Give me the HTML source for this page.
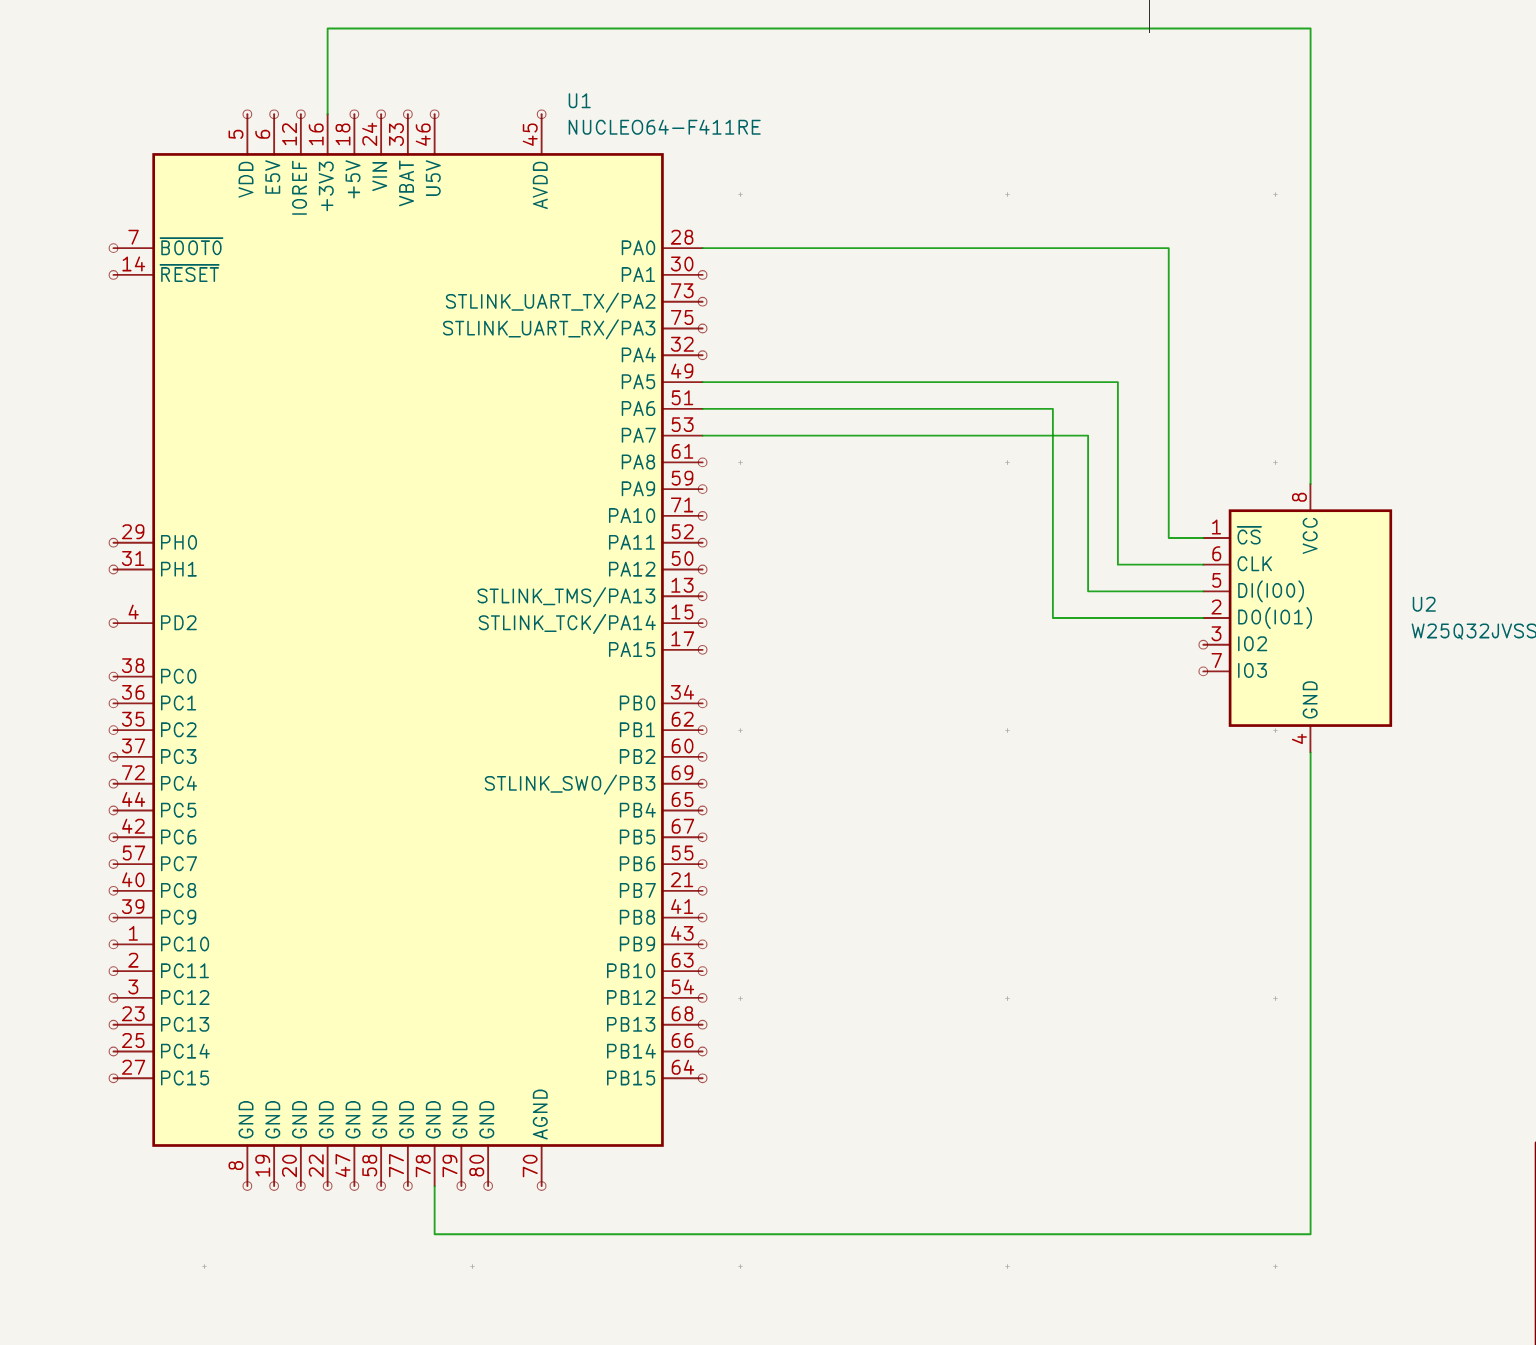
<!DOCTYPE html>
<html><head><meta charset="utf-8"><title>schematic</title>
<style>html,body{margin:0;padding:0;background:#F5F4EF;font-family:"Liberation Sans",sans-serif}svg{display:block}</style>
</head><body>
<svg width="1536" height="1345" viewBox="0 0 1536 1345" role="img" aria-label="KiCad schematic: U1 NUCLEO64-F411RE connected to U2 W25Q32JVSS SPI flash">
<desc>U1 NUCLEO64-F411RE pins PA0 PA5 PA6 PA7 +3V3 GND wired to U2 W25Q32JVSS pins CS CLK DI(IO0) DO(IO1) VCC GND</desc>
<rect width="1536" height="1345" fill="#F5F4EF"/>
<path d="M202.2 194.5h4.6" stroke="#c2c2c0" stroke-width="1" fill="none"/><path d="M204.5 192.4v4.4" stroke="#b1b1b1" stroke-width="1" fill="none"/>
<path d="M202.2 462.5h4.6" stroke="#c2c2c0" stroke-width="1" fill="none"/><path d="M204.5 460.4v4.4" stroke="#b1b1b1" stroke-width="1" fill="none"/>
<path d="M202.2 730.5h4.6" stroke="#c2c2c0" stroke-width="1" fill="none"/><path d="M204.5 728.4v4.4" stroke="#b1b1b1" stroke-width="1" fill="none"/>
<path d="M202.2 998.5h4.6" stroke="#c2c2c0" stroke-width="1" fill="none"/><path d="M204.5 996.4v4.4" stroke="#b1b1b1" stroke-width="1" fill="none"/>
<path d="M202.2 1266.5h4.6" stroke="#c2c2c0" stroke-width="1" fill="none"/><path d="M204.5 1264.4v4.4" stroke="#b1b1b1" stroke-width="1" fill="none"/>
<path d="M470.2 194.5h4.6" stroke="#c2c2c0" stroke-width="1" fill="none"/><path d="M472.5 192.4v4.4" stroke="#b1b1b1" stroke-width="1" fill="none"/>
<path d="M470.2 462.5h4.6" stroke="#c2c2c0" stroke-width="1" fill="none"/><path d="M472.5 460.4v4.4" stroke="#b1b1b1" stroke-width="1" fill="none"/>
<path d="M470.2 730.5h4.6" stroke="#c2c2c0" stroke-width="1" fill="none"/><path d="M472.5 728.4v4.4" stroke="#b1b1b1" stroke-width="1" fill="none"/>
<path d="M470.2 998.5h4.6" stroke="#c2c2c0" stroke-width="1" fill="none"/><path d="M472.5 996.4v4.4" stroke="#b1b1b1" stroke-width="1" fill="none"/>
<path d="M470.2 1266.5h4.6" stroke="#c2c2c0" stroke-width="1" fill="none"/><path d="M472.5 1264.4v4.4" stroke="#b1b1b1" stroke-width="1" fill="none"/>
<path d="M738.2 194.5h4.6" stroke="#c2c2c0" stroke-width="1" fill="none"/><path d="M740.5 192.4v4.4" stroke="#b1b1b1" stroke-width="1" fill="none"/>
<path d="M738.2 462.5h4.6" stroke="#c2c2c0" stroke-width="1" fill="none"/><path d="M740.5 460.4v4.4" stroke="#b1b1b1" stroke-width="1" fill="none"/>
<path d="M738.2 730.5h4.6" stroke="#c2c2c0" stroke-width="1" fill="none"/><path d="M740.5 728.4v4.4" stroke="#b1b1b1" stroke-width="1" fill="none"/>
<path d="M738.2 998.5h4.6" stroke="#c2c2c0" stroke-width="1" fill="none"/><path d="M740.5 996.4v4.4" stroke="#b1b1b1" stroke-width="1" fill="none"/>
<path d="M738.2 1266.5h4.6" stroke="#c2c2c0" stroke-width="1" fill="none"/><path d="M740.5 1264.4v4.4" stroke="#b1b1b1" stroke-width="1" fill="none"/>
<path d="M1005.2 194.5h4.6" stroke="#c2c2c0" stroke-width="1" fill="none"/><path d="M1007.5 192.4v4.4" stroke="#b1b1b1" stroke-width="1" fill="none"/>
<path d="M1005.2 462.5h4.6" stroke="#c2c2c0" stroke-width="1" fill="none"/><path d="M1007.5 460.4v4.4" stroke="#b1b1b1" stroke-width="1" fill="none"/>
<path d="M1005.2 730.5h4.6" stroke="#c2c2c0" stroke-width="1" fill="none"/><path d="M1007.5 728.4v4.4" stroke="#b1b1b1" stroke-width="1" fill="none"/>
<path d="M1005.2 998.5h4.6" stroke="#c2c2c0" stroke-width="1" fill="none"/><path d="M1007.5 996.4v4.4" stroke="#b1b1b1" stroke-width="1" fill="none"/>
<path d="M1005.2 1266.5h4.6" stroke="#c2c2c0" stroke-width="1" fill="none"/><path d="M1007.5 1264.4v4.4" stroke="#b1b1b1" stroke-width="1" fill="none"/>
<path d="M1273.2 194.5h4.6" stroke="#c2c2c0" stroke-width="1" fill="none"/><path d="M1275.5 192.4v4.4" stroke="#b1b1b1" stroke-width="1" fill="none"/>
<path d="M1273.2 462.5h4.6" stroke="#c2c2c0" stroke-width="1" fill="none"/><path d="M1275.5 460.4v4.4" stroke="#b1b1b1" stroke-width="1" fill="none"/>
<path d="M1273.2 730.5h4.6" stroke="#c2c2c0" stroke-width="1" fill="none"/><path d="M1275.5 728.4v4.4" stroke="#b1b1b1" stroke-width="1" fill="none"/>
<path d="M1273.2 998.5h4.6" stroke="#c2c2c0" stroke-width="1" fill="none"/><path d="M1275.5 996.4v4.4" stroke="#b1b1b1" stroke-width="1" fill="none"/>
<path d="M1273.2 1266.5h4.6" stroke="#c2c2c0" stroke-width="1" fill="none"/><path d="M1275.5 1264.4v4.4" stroke="#b1b1b1" stroke-width="1" fill="none"/>
<rect x="153.66" y="154.45" width="508.78" height="991.05" fill="#FFFFC2" stroke="#840000" stroke-width="2.7"/>
<path d="M113.49 248.16L153.66 248.16" stroke="#840000" stroke-width="1.85" stroke-linecap="round" stroke-opacity="0.86" fill="none"/>
<circle cx="113.49" cy="248.16" r="4.35" stroke="#840000" stroke-opacity="0.66" stroke-width="1.1" fill="none"/>
<path d="M113.49 274.94L153.66 274.94" stroke="#840000" stroke-width="1.85" stroke-linecap="round" stroke-opacity="0.86" fill="none"/>
<circle cx="113.49" cy="274.94" r="4.35" stroke="#840000" stroke-opacity="0.66" stroke-width="1.1" fill="none"/>
<path d="M113.49 542.72L153.66 542.72" stroke="#840000" stroke-width="1.85" stroke-linecap="round" stroke-opacity="0.86" fill="none"/>
<circle cx="113.49" cy="542.72" r="4.35" stroke="#840000" stroke-opacity="0.66" stroke-width="1.1" fill="none"/>
<path d="M113.49 569.5L153.66 569.5" stroke="#840000" stroke-width="1.85" stroke-linecap="round" stroke-opacity="0.86" fill="none"/>
<circle cx="113.49" cy="569.5" r="4.35" stroke="#840000" stroke-opacity="0.66" stroke-width="1.1" fill="none"/>
<path d="M113.49 623.05L153.66 623.05" stroke="#840000" stroke-width="1.85" stroke-linecap="round" stroke-opacity="0.86" fill="none"/>
<circle cx="113.49" cy="623.05" r="4.35" stroke="#840000" stroke-opacity="0.66" stroke-width="1.1" fill="none"/>
<path d="M113.49 676.61L153.66 676.61" stroke="#840000" stroke-width="1.85" stroke-linecap="round" stroke-opacity="0.86" fill="none"/>
<circle cx="113.49" cy="676.61" r="4.35" stroke="#840000" stroke-opacity="0.66" stroke-width="1.1" fill="none"/>
<path d="M113.49 703.39L153.66 703.39" stroke="#840000" stroke-width="1.85" stroke-linecap="round" stroke-opacity="0.86" fill="none"/>
<circle cx="113.49" cy="703.39" r="4.35" stroke="#840000" stroke-opacity="0.66" stroke-width="1.1" fill="none"/>
<path d="M113.49 730.16L153.66 730.16" stroke="#840000" stroke-width="1.85" stroke-linecap="round" stroke-opacity="0.86" fill="none"/>
<circle cx="113.49" cy="730.16" r="4.35" stroke="#840000" stroke-opacity="0.66" stroke-width="1.1" fill="none"/>
<path d="M113.49 756.94L153.66 756.94" stroke="#840000" stroke-width="1.85" stroke-linecap="round" stroke-opacity="0.86" fill="none"/>
<circle cx="113.49" cy="756.94" r="4.35" stroke="#840000" stroke-opacity="0.66" stroke-width="1.1" fill="none"/>
<path d="M113.49 783.72L153.66 783.72" stroke="#840000" stroke-width="1.85" stroke-linecap="round" stroke-opacity="0.86" fill="none"/>
<circle cx="113.49" cy="783.72" r="4.35" stroke="#840000" stroke-opacity="0.66" stroke-width="1.1" fill="none"/>
<path d="M113.49 810.5L153.66 810.5" stroke="#840000" stroke-width="1.85" stroke-linecap="round" stroke-opacity="0.86" fill="none"/>
<circle cx="113.49" cy="810.5" r="4.35" stroke="#840000" stroke-opacity="0.66" stroke-width="1.1" fill="none"/>
<path d="M113.49 837.28L153.66 837.28" stroke="#840000" stroke-width="1.85" stroke-linecap="round" stroke-opacity="0.86" fill="none"/>
<circle cx="113.49" cy="837.28" r="4.35" stroke="#840000" stroke-opacity="0.66" stroke-width="1.1" fill="none"/>
<path d="M113.49 864.05L153.66 864.05" stroke="#840000" stroke-width="1.85" stroke-linecap="round" stroke-opacity="0.86" fill="none"/>
<circle cx="113.49" cy="864.05" r="4.35" stroke="#840000" stroke-opacity="0.66" stroke-width="1.1" fill="none"/>
<path d="M113.49 890.83L153.66 890.83" stroke="#840000" stroke-width="1.85" stroke-linecap="round" stroke-opacity="0.86" fill="none"/>
<circle cx="113.49" cy="890.83" r="4.35" stroke="#840000" stroke-opacity="0.66" stroke-width="1.1" fill="none"/>
<path d="M113.49 917.61L153.66 917.61" stroke="#840000" stroke-width="1.85" stroke-linecap="round" stroke-opacity="0.86" fill="none"/>
<circle cx="113.49" cy="917.61" r="4.35" stroke="#840000" stroke-opacity="0.66" stroke-width="1.1" fill="none"/>
<path d="M113.49 944.39L153.66 944.39" stroke="#840000" stroke-width="1.85" stroke-linecap="round" stroke-opacity="0.86" fill="none"/>
<circle cx="113.49" cy="944.39" r="4.35" stroke="#840000" stroke-opacity="0.66" stroke-width="1.1" fill="none"/>
<path d="M113.49 971.17L153.66 971.17" stroke="#840000" stroke-width="1.85" stroke-linecap="round" stroke-opacity="0.86" fill="none"/>
<circle cx="113.49" cy="971.17" r="4.35" stroke="#840000" stroke-opacity="0.66" stroke-width="1.1" fill="none"/>
<path d="M113.49 997.94L153.66 997.94" stroke="#840000" stroke-width="1.85" stroke-linecap="round" stroke-opacity="0.86" fill="none"/>
<circle cx="113.49" cy="997.94" r="4.35" stroke="#840000" stroke-opacity="0.66" stroke-width="1.1" fill="none"/>
<path d="M113.49 1024.72L153.66 1024.72" stroke="#840000" stroke-width="1.85" stroke-linecap="round" stroke-opacity="0.86" fill="none"/>
<circle cx="113.49" cy="1024.72" r="4.35" stroke="#840000" stroke-opacity="0.66" stroke-width="1.1" fill="none"/>
<path d="M113.49 1051.5L153.66 1051.5" stroke="#840000" stroke-width="1.85" stroke-linecap="round" stroke-opacity="0.86" fill="none"/>
<circle cx="113.49" cy="1051.5" r="4.35" stroke="#840000" stroke-opacity="0.66" stroke-width="1.1" fill="none"/>
<path d="M113.49 1078.28L153.66 1078.28" stroke="#840000" stroke-width="1.85" stroke-linecap="round" stroke-opacity="0.86" fill="none"/>
<circle cx="113.49" cy="1078.28" r="4.35" stroke="#840000" stroke-opacity="0.66" stroke-width="1.1" fill="none"/>
<path d="M662.44 248.16L702.61 248.16" stroke="#840000" stroke-width="1.85" stroke-linecap="round" stroke-opacity="0.86" fill="none"/>
<path d="M662.44 274.94L702.61 274.94" stroke="#840000" stroke-width="1.85" stroke-linecap="round" stroke-opacity="0.86" fill="none"/>
<circle cx="702.61" cy="274.94" r="4.35" stroke="#840000" stroke-opacity="0.66" stroke-width="1.1" fill="none"/>
<path d="M662.44 301.72L702.61 301.72" stroke="#840000" stroke-width="1.85" stroke-linecap="round" stroke-opacity="0.86" fill="none"/>
<circle cx="702.61" cy="301.72" r="4.35" stroke="#840000" stroke-opacity="0.66" stroke-width="1.1" fill="none"/>
<path d="M662.44 328.49L702.61 328.49" stroke="#840000" stroke-width="1.85" stroke-linecap="round" stroke-opacity="0.86" fill="none"/>
<circle cx="702.61" cy="328.49" r="4.35" stroke="#840000" stroke-opacity="0.66" stroke-width="1.1" fill="none"/>
<path d="M662.44 355.27L702.61 355.27" stroke="#840000" stroke-width="1.85" stroke-linecap="round" stroke-opacity="0.86" fill="none"/>
<circle cx="702.61" cy="355.27" r="4.35" stroke="#840000" stroke-opacity="0.66" stroke-width="1.1" fill="none"/>
<path d="M662.44 382.05L702.61 382.05" stroke="#840000" stroke-width="1.85" stroke-linecap="round" stroke-opacity="0.86" fill="none"/>
<path d="M662.44 408.83L702.61 408.83" stroke="#840000" stroke-width="1.85" stroke-linecap="round" stroke-opacity="0.86" fill="none"/>
<path d="M662.44 435.61L702.61 435.61" stroke="#840000" stroke-width="1.85" stroke-linecap="round" stroke-opacity="0.86" fill="none"/>
<path d="M662.44 462.38L702.61 462.38" stroke="#840000" stroke-width="1.85" stroke-linecap="round" stroke-opacity="0.86" fill="none"/>
<circle cx="702.61" cy="462.38" r="4.35" stroke="#840000" stroke-opacity="0.66" stroke-width="1.1" fill="none"/>
<path d="M662.44 489.16L702.61 489.16" stroke="#840000" stroke-width="1.85" stroke-linecap="round" stroke-opacity="0.86" fill="none"/>
<circle cx="702.61" cy="489.16" r="4.35" stroke="#840000" stroke-opacity="0.66" stroke-width="1.1" fill="none"/>
<path d="M662.44 515.94L702.61 515.94" stroke="#840000" stroke-width="1.85" stroke-linecap="round" stroke-opacity="0.86" fill="none"/>
<circle cx="702.61" cy="515.94" r="4.35" stroke="#840000" stroke-opacity="0.66" stroke-width="1.1" fill="none"/>
<path d="M662.44 542.72L702.61 542.72" stroke="#840000" stroke-width="1.85" stroke-linecap="round" stroke-opacity="0.86" fill="none"/>
<circle cx="702.61" cy="542.72" r="4.35" stroke="#840000" stroke-opacity="0.66" stroke-width="1.1" fill="none"/>
<path d="M662.44 569.5L702.61 569.5" stroke="#840000" stroke-width="1.85" stroke-linecap="round" stroke-opacity="0.86" fill="none"/>
<circle cx="702.61" cy="569.5" r="4.35" stroke="#840000" stroke-opacity="0.66" stroke-width="1.1" fill="none"/>
<path d="M662.44 596.27L702.61 596.27" stroke="#840000" stroke-width="1.85" stroke-linecap="round" stroke-opacity="0.86" fill="none"/>
<circle cx="702.61" cy="596.27" r="4.35" stroke="#840000" stroke-opacity="0.66" stroke-width="1.1" fill="none"/>
<path d="M662.44 623.05L702.61 623.05" stroke="#840000" stroke-width="1.85" stroke-linecap="round" stroke-opacity="0.86" fill="none"/>
<circle cx="702.61" cy="623.05" r="4.35" stroke="#840000" stroke-opacity="0.66" stroke-width="1.1" fill="none"/>
<path d="M662.44 649.83L702.61 649.83" stroke="#840000" stroke-width="1.85" stroke-linecap="round" stroke-opacity="0.86" fill="none"/>
<circle cx="702.61" cy="649.83" r="4.35" stroke="#840000" stroke-opacity="0.66" stroke-width="1.1" fill="none"/>
<path d="M662.44 703.39L702.61 703.39" stroke="#840000" stroke-width="1.85" stroke-linecap="round" stroke-opacity="0.86" fill="none"/>
<circle cx="702.61" cy="703.39" r="4.35" stroke="#840000" stroke-opacity="0.66" stroke-width="1.1" fill="none"/>
<path d="M662.44 730.16L702.61 730.16" stroke="#840000" stroke-width="1.85" stroke-linecap="round" stroke-opacity="0.86" fill="none"/>
<circle cx="702.61" cy="730.16" r="4.35" stroke="#840000" stroke-opacity="0.66" stroke-width="1.1" fill="none"/>
<path d="M662.44 756.94L702.61 756.94" stroke="#840000" stroke-width="1.85" stroke-linecap="round" stroke-opacity="0.86" fill="none"/>
<circle cx="702.61" cy="756.94" r="4.35" stroke="#840000" stroke-opacity="0.66" stroke-width="1.1" fill="none"/>
<path d="M662.44 783.72L702.61 783.72" stroke="#840000" stroke-width="1.85" stroke-linecap="round" stroke-opacity="0.86" fill="none"/>
<circle cx="702.61" cy="783.72" r="4.35" stroke="#840000" stroke-opacity="0.66" stroke-width="1.1" fill="none"/>
<path d="M662.44 810.5L702.61 810.5" stroke="#840000" stroke-width="1.85" stroke-linecap="round" stroke-opacity="0.86" fill="none"/>
<circle cx="702.61" cy="810.5" r="4.35" stroke="#840000" stroke-opacity="0.66" stroke-width="1.1" fill="none"/>
<path d="M662.44 837.28L702.61 837.28" stroke="#840000" stroke-width="1.85" stroke-linecap="round" stroke-opacity="0.86" fill="none"/>
<circle cx="702.61" cy="837.28" r="4.35" stroke="#840000" stroke-opacity="0.66" stroke-width="1.1" fill="none"/>
<path d="M662.44 864.05L702.61 864.05" stroke="#840000" stroke-width="1.85" stroke-linecap="round" stroke-opacity="0.86" fill="none"/>
<circle cx="702.61" cy="864.05" r="4.35" stroke="#840000" stroke-opacity="0.66" stroke-width="1.1" fill="none"/>
<path d="M662.44 890.83L702.61 890.83" stroke="#840000" stroke-width="1.85" stroke-linecap="round" stroke-opacity="0.86" fill="none"/>
<circle cx="702.61" cy="890.83" r="4.35" stroke="#840000" stroke-opacity="0.66" stroke-width="1.1" fill="none"/>
<path d="M662.44 917.61L702.61 917.61" stroke="#840000" stroke-width="1.85" stroke-linecap="round" stroke-opacity="0.86" fill="none"/>
<circle cx="702.61" cy="917.61" r="4.35" stroke="#840000" stroke-opacity="0.66" stroke-width="1.1" fill="none"/>
<path d="M662.44 944.39L702.61 944.39" stroke="#840000" stroke-width="1.85" stroke-linecap="round" stroke-opacity="0.86" fill="none"/>
<circle cx="702.61" cy="944.39" r="4.35" stroke="#840000" stroke-opacity="0.66" stroke-width="1.1" fill="none"/>
<path d="M662.44 971.17L702.61 971.17" stroke="#840000" stroke-width="1.85" stroke-linecap="round" stroke-opacity="0.86" fill="none"/>
<circle cx="702.61" cy="971.17" r="4.35" stroke="#840000" stroke-opacity="0.66" stroke-width="1.1" fill="none"/>
<path d="M662.44 997.94L702.61 997.94" stroke="#840000" stroke-width="1.85" stroke-linecap="round" stroke-opacity="0.86" fill="none"/>
<circle cx="702.61" cy="997.94" r="4.35" stroke="#840000" stroke-opacity="0.66" stroke-width="1.1" fill="none"/>
<path d="M662.44 1024.72L702.61 1024.72" stroke="#840000" stroke-width="1.85" stroke-linecap="round" stroke-opacity="0.86" fill="none"/>
<circle cx="702.61" cy="1024.72" r="4.35" stroke="#840000" stroke-opacity="0.66" stroke-width="1.1" fill="none"/>
<path d="M662.44 1051.5L702.61 1051.5" stroke="#840000" stroke-width="1.85" stroke-linecap="round" stroke-opacity="0.86" fill="none"/>
<circle cx="702.61" cy="1051.5" r="4.35" stroke="#840000" stroke-opacity="0.66" stroke-width="1.1" fill="none"/>
<path d="M662.44 1078.28L702.61 1078.28" stroke="#840000" stroke-width="1.85" stroke-linecap="round" stroke-opacity="0.86" fill="none"/>
<circle cx="702.61" cy="1078.28" r="4.35" stroke="#840000" stroke-opacity="0.66" stroke-width="1.1" fill="none"/>
<path d="M247.38 114.28L247.38 154.45" stroke="#840000" stroke-width="1.85" stroke-linecap="round" stroke-opacity="0.86" fill="none"/>
<circle cx="247.38" cy="114.28" r="4.35" stroke="#840000" stroke-opacity="0.66" stroke-width="1.1" fill="none"/>
<path d="M274.13 114.28L274.13 154.45" stroke="#840000" stroke-width="1.85" stroke-linecap="round" stroke-opacity="0.86" fill="none"/>
<circle cx="274.13" cy="114.28" r="4.35" stroke="#840000" stroke-opacity="0.66" stroke-width="1.1" fill="none"/>
<path d="M300.88 114.28L300.88 154.45" stroke="#840000" stroke-width="1.85" stroke-linecap="round" stroke-opacity="0.86" fill="none"/>
<circle cx="300.88" cy="114.28" r="4.35" stroke="#840000" stroke-opacity="0.66" stroke-width="1.1" fill="none"/>
<path d="M327.63 114.28L327.63 154.45" stroke="#840000" stroke-width="1.85" stroke-linecap="round" stroke-opacity="0.86" fill="none"/>
<path d="M354.38 114.28L354.38 154.45" stroke="#840000" stroke-width="1.85" stroke-linecap="round" stroke-opacity="0.86" fill="none"/>
<circle cx="354.38" cy="114.28" r="4.35" stroke="#840000" stroke-opacity="0.66" stroke-width="1.1" fill="none"/>
<path d="M381.13 114.28L381.13 154.45" stroke="#840000" stroke-width="1.85" stroke-linecap="round" stroke-opacity="0.86" fill="none"/>
<circle cx="381.13" cy="114.28" r="4.35" stroke="#840000" stroke-opacity="0.66" stroke-width="1.1" fill="none"/>
<path d="M407.88 114.28L407.88 154.45" stroke="#840000" stroke-width="1.85" stroke-linecap="round" stroke-opacity="0.86" fill="none"/>
<circle cx="407.88" cy="114.28" r="4.35" stroke="#840000" stroke-opacity="0.66" stroke-width="1.1" fill="none"/>
<path d="M434.63 114.28L434.63 154.45" stroke="#840000" stroke-width="1.85" stroke-linecap="round" stroke-opacity="0.86" fill="none"/>
<circle cx="434.63" cy="114.28" r="4.35" stroke="#840000" stroke-opacity="0.66" stroke-width="1.1" fill="none"/>
<path d="M541.63 114.28L541.63 154.45" stroke="#840000" stroke-width="1.85" stroke-linecap="round" stroke-opacity="0.86" fill="none"/>
<circle cx="541.63" cy="114.28" r="4.35" stroke="#840000" stroke-opacity="0.66" stroke-width="1.1" fill="none"/>
<path d="M247.38 1145.5L247.38 1186.07" stroke="#840000" stroke-width="1.85" stroke-linecap="round" stroke-opacity="0.86" fill="none"/>
<circle cx="247.38" cy="1186.07" r="4.35" stroke="#840000" stroke-opacity="0.66" stroke-width="1.1" fill="none"/>
<path d="M274.13 1145.5L274.13 1186.07" stroke="#840000" stroke-width="1.85" stroke-linecap="round" stroke-opacity="0.86" fill="none"/>
<circle cx="274.13" cy="1186.07" r="4.35" stroke="#840000" stroke-opacity="0.66" stroke-width="1.1" fill="none"/>
<path d="M300.88 1145.5L300.88 1186.07" stroke="#840000" stroke-width="1.85" stroke-linecap="round" stroke-opacity="0.86" fill="none"/>
<circle cx="300.88" cy="1186.07" r="4.35" stroke="#840000" stroke-opacity="0.66" stroke-width="1.1" fill="none"/>
<path d="M327.63 1145.5L327.63 1186.07" stroke="#840000" stroke-width="1.85" stroke-linecap="round" stroke-opacity="0.86" fill="none"/>
<circle cx="327.63" cy="1186.07" r="4.35" stroke="#840000" stroke-opacity="0.66" stroke-width="1.1" fill="none"/>
<path d="M354.38 1145.5L354.38 1186.07" stroke="#840000" stroke-width="1.85" stroke-linecap="round" stroke-opacity="0.86" fill="none"/>
<circle cx="354.38" cy="1186.07" r="4.35" stroke="#840000" stroke-opacity="0.66" stroke-width="1.1" fill="none"/>
<path d="M381.13 1145.5L381.13 1186.07" stroke="#840000" stroke-width="1.85" stroke-linecap="round" stroke-opacity="0.86" fill="none"/>
<circle cx="381.13" cy="1186.07" r="4.35" stroke="#840000" stroke-opacity="0.66" stroke-width="1.1" fill="none"/>
<path d="M407.88 1145.5L407.88 1186.07" stroke="#840000" stroke-width="1.85" stroke-linecap="round" stroke-opacity="0.86" fill="none"/>
<circle cx="407.88" cy="1186.07" r="4.35" stroke="#840000" stroke-opacity="0.66" stroke-width="1.1" fill="none"/>
<path d="M434.63 1145.5L434.63 1186.07" stroke="#840000" stroke-width="1.85" stroke-linecap="round" stroke-opacity="0.86" fill="none"/>
<path d="M461.38 1145.5L461.38 1186.07" stroke="#840000" stroke-width="1.85" stroke-linecap="round" stroke-opacity="0.86" fill="none"/>
<circle cx="461.38" cy="1186.07" r="4.35" stroke="#840000" stroke-opacity="0.66" stroke-width="1.1" fill="none"/>
<path d="M488.13 1145.5L488.13 1186.07" stroke="#840000" stroke-width="1.85" stroke-linecap="round" stroke-opacity="0.86" fill="none"/>
<circle cx="488.13" cy="1186.07" r="4.35" stroke="#840000" stroke-opacity="0.66" stroke-width="1.1" fill="none"/>
<path d="M541.63 1145.5L541.63 1186.07" stroke="#840000" stroke-width="1.85" stroke-linecap="round" stroke-opacity="0.86" fill="none"/>
<circle cx="541.63" cy="1186.07" r="4.35" stroke="#840000" stroke-opacity="0.66" stroke-width="1.1" fill="none"/>
<rect x="1230.1" y="510.7" width="160.67" height="214.85" fill="#FFFFC2" stroke="#840000" stroke-width="2.7"/>
<path d="M1203.32 538L1230.1 538" stroke="#840000" stroke-width="1.85" stroke-linecap="round" stroke-opacity="0.86" fill="none"/>
<path d="M1203.32 564.68L1230.1 564.68" stroke="#840000" stroke-width="1.85" stroke-linecap="round" stroke-opacity="0.86" fill="none"/>
<path d="M1203.32 591.36L1230.1 591.36" stroke="#840000" stroke-width="1.85" stroke-linecap="round" stroke-opacity="0.86" fill="none"/>
<path d="M1203.32 618.04L1230.1 618.04" stroke="#840000" stroke-width="1.85" stroke-linecap="round" stroke-opacity="0.86" fill="none"/>
<path d="M1203.32 644.72L1230.1 644.72" stroke="#840000" stroke-width="1.85" stroke-linecap="round" stroke-opacity="0.86" fill="none"/>
<circle cx="1203.32" cy="644.72" r="4.35" stroke="#840000" stroke-opacity="0.66" stroke-width="1.1" fill="none"/>
<path d="M1203.32 671.4L1230.1 671.4" stroke="#840000" stroke-width="1.85" stroke-linecap="round" stroke-opacity="0.86" fill="none"/>
<circle cx="1203.32" cy="671.4" r="4.35" stroke="#840000" stroke-opacity="0.66" stroke-width="1.1" fill="none"/>
<path d="M1310.43 483.92L1310.43 510.7" stroke="#840000" stroke-width="1.85" stroke-linecap="round" stroke-opacity="0.86" fill="none"/>
<path d="M1310.43 725.55L1310.43 752.33" stroke="#840000" stroke-width="1.85" stroke-linecap="round" stroke-opacity="0.86" fill="none"/>
<path d="M327.63 114.28L327.63 28.45L1310.6 28.45L1310.6 483.92" stroke="#009600" stroke-width="1.85" stroke-linejoin="round" stroke-linecap="round" stroke-opacity="0.86" fill="none"/>
<path d="M434.63 1186.07L434.63 1234.2L1310.6 1234.2L1310.6 752.33" stroke="#009600" stroke-width="1.85" stroke-linejoin="round" stroke-linecap="round" stroke-opacity="0.86" fill="none"/>
<path d="M702.61 248.16L1168.75 248.16L1168.75 538L1203.32 538" stroke="#009600" stroke-width="1.85" stroke-linejoin="round" stroke-linecap="round" stroke-opacity="0.86" fill="none"/>
<path d="M702.61 382.05L1117.9 382.05L1117.9 564.68L1203.32 564.68" stroke="#009600" stroke-width="1.85" stroke-linejoin="round" stroke-linecap="round" stroke-opacity="0.86" fill="none"/>
<path d="M702.61 408.83L1052.9 408.83L1052.9 618.04L1203.32 618.04" stroke="#009600" stroke-width="1.85" stroke-linejoin="round" stroke-linecap="round" stroke-opacity="0.86" fill="none"/>
<path d="M702.61 435.61L1088.1 435.61L1088.1 591.36L1203.32 591.36" stroke="#009600" stroke-width="1.85" stroke-linejoin="round" stroke-linecap="round" stroke-opacity="0.86" fill="none"/>
<path d="M1149.5 0L1149.5 33" stroke="#323232" stroke-width="1" stroke-linecap="butt" stroke-opacity="1" fill="none"/>
<rect x="1536.05" y="1142.9" stroke-linejoin="round" width="60" height="260" fill="#FFFFC2" stroke="#840000" stroke-width="2.7"/>
<path d="M162.04 241.11L162.04 254.51M162.04 241.11L166.64 241.11L168.17 241.75L168.68 242.39L169.19 243.66L169.19 244.94L168.68 246.21L168.17 246.85L166.64 247.49M162.04 247.49L166.64 247.49L168.17 248.13L168.68 248.77L169.19 250.04L169.19 251.96L168.68 253.23L168.17 253.87L166.64 254.51L162.04 254.51M178.31 241.11L177.19 241.56L176.17 242.64L175.4 244.17L175 245.9L175 249.72L175.4 251.45L176.17 252.98L177.19 254.06L178.31 254.51L179.84 254.51L180.97 254.06L181.99 252.98L182.75 251.45L183.16 249.72L183.16 245.9L182.75 244.17L181.99 242.64L180.97 241.56L179.84 241.11L178.31 241.11M192.35 241.11L191.23 241.56L190.21 242.64L189.44 244.17L189.03 245.9L189.03 249.72L189.44 251.45L190.21 252.98L191.23 254.06L192.35 254.51L193.88 254.51L195.01 254.06L196.03 252.98L196.79 251.45L197.2 249.72L197.2 245.9L196.79 244.17L196.03 242.64L195.01 241.56L193.88 241.11L192.35 241.11M205.4 241.11L205.4 254.51M201.56 241.11L209.24 241.11M217.05 241.11L215.77 241.49L214.62 242.64L213.73 244.3L213.28 246.21L213.28 249.41L213.73 251.32L214.62 252.98L215.77 254.13L217.05 254.51L218.32 254.13L219.47 252.98L220.36 251.32L220.81 249.41L220.81 246.21L220.36 244.3L219.47 242.64L218.32 241.49L217.05 241.11M160.41 238.11L222.63 238.11M161.92 281.29L161.92 267.89L166.68 267.89L168.27 268.53L168.8 269.16L169.33 270.44L169.33 271.72L168.8 272.99L168.27 273.63L166.68 274.27L161.92 274.27M165.62 274.27L169.33 281.29M175.28 267.89L175.28 281.29M175.28 267.89L182 267.89M175.28 274.27L180.19 274.27M175.28 281.29L182 281.29M194.81 269.8L193.6 268.53L191.78 267.89L189.35 267.89L187.53 268.53L186.32 269.8L186.32 271.08L186.93 272.35L187.53 272.99L188.75 273.63L192.38 274.91L193.6 275.55L194.2 276.18L194.81 277.46L194.81 279.37L193.6 280.65L191.78 281.29L189.35 281.29L187.53 280.65L186.32 279.37M200.16 267.89L200.16 281.29M200.16 267.89L206.88 267.89M200.16 274.27L205.08 274.27M200.16 281.29L206.88 281.29M214.33 267.89L214.33 281.29M210.49 267.89L218.18 267.89M160.41 264.89L218.8 264.89M161.75 549.07L161.75 535.67L166.92 535.67L168.65 536.31L169.22 536.94L169.79 538.22L169.79 540.13L169.22 541.41L168.65 542.05L166.92 542.69L161.75 542.69M175.24 535.67L175.24 549.07M182.92 535.67L182.92 549.07M175.24 542.05L182.92 542.05M192.48 535.67L191.2 536.05L190.05 537.2L189.16 538.86L188.71 540.77L188.71 543.96L189.16 545.88L190.05 547.54L191.2 548.69L192.48 549.07L193.76 548.69L194.9 547.54L195.8 545.88L196.24 543.96L196.24 540.77L195.8 538.86L194.9 537.2L193.76 536.05L192.48 535.67M161.75 575.85L161.75 562.45L166.92 562.45L168.65 563.08L169.22 563.72L169.79 565L169.79 566.91L169.22 568.19L168.65 568.83L166.92 569.47L161.75 569.47M175.24 562.45L175.24 575.85M182.92 562.45L182.92 575.85M175.24 568.83L182.92 568.83M188.78 565.38L190.56 564.36L192.48 562.45L192.48 575.85M188.4 575.85L196.05 575.85M161.75 629.4L161.75 616L166.92 616L168.65 616.64L169.22 617.28L169.79 618.55L169.79 620.47L169.22 621.74L168.65 622.38L166.92 623.02L161.75 623.02M175.19 616L175.19 629.4M175.19 616L179.03 616L180.68 616.64L181.78 617.92L182.33 619.19L182.88 621.11L182.88 624.3L182.33 626.21L181.78 627.49L180.68 628.76L179.03 629.4L175.19 629.4M187.88 617.53L188.78 616.64L190.31 616L193.12 616L194.52 616.51L195.41 617.53L195.8 618.81L195.54 620.21L194.65 621.74L187.37 629.4L196.05 629.4M161.75 682.96L161.75 669.56L166.92 669.56L168.65 670.2L169.22 670.83L169.79 672.11L169.79 674.02L169.22 675.3L168.65 675.94L166.92 676.58L161.75 676.58M182.97 672.75L182.41 671.47L181.29 670.2L180.16 669.56L177.92 669.56L176.79 670.2L175.67 671.47L175.11 672.75L174.55 674.66L174.55 677.85L175.11 679.77L175.67 681.04L176.79 682.32L177.92 682.96L180.16 682.96L181.29 682.32L182.41 681.04L182.97 679.77M191.84 669.56L190.56 669.94L189.42 671.09L188.52 672.75L188.08 674.66L188.08 677.85L188.52 679.77L189.42 681.43L190.56 682.58L191.84 682.96L193.12 682.58L194.27 681.43L195.16 679.77L195.61 677.85L195.61 674.66L195.16 672.75L194.27 671.09L193.12 669.94L191.84 669.56M161.75 709.74L161.75 696.34L166.92 696.34L168.65 696.97L169.22 697.61L169.79 698.89L169.79 700.8L169.22 702.08L168.65 702.72L166.92 703.36L161.75 703.36M182.97 699.53L182.41 698.25L181.29 696.97L180.16 696.34L177.92 696.34L176.79 696.97L175.67 698.25L175.11 699.53L174.55 701.44L174.55 704.63L175.11 706.55L175.67 707.82L176.79 709.1L177.92 709.74L180.16 709.74L181.29 709.1L182.41 707.82L182.97 706.55M188.14 699.27L189.93 698.25L191.84 696.34L191.84 709.74M187.76 709.74L195.41 709.74M161.75 736.51L161.75 723.11L166.92 723.11L168.65 723.75L169.22 724.39L169.79 725.67L169.79 727.58L169.22 728.86L168.65 729.49L166.92 730.13L161.75 730.13M182.97 726.3L182.41 725.03L181.29 723.75L180.16 723.11L177.92 723.11L176.79 723.75L175.67 725.03L175.11 726.3L174.55 728.22L174.55 731.41L175.11 733.32L175.67 734.6L176.79 735.88L177.92 736.51L180.16 736.51L181.29 735.88L182.41 734.6L182.97 733.32M187.88 724.65L188.78 723.75L190.31 723.11L193.12 723.11L194.52 723.62L195.41 724.65L195.8 725.92L195.54 727.33L194.65 728.86L187.37 736.51L196.05 736.51M161.75 763.29L161.75 749.89L166.92 749.89L168.65 750.53L169.22 751.17L169.79 752.44L169.79 754.36L169.22 755.63L168.65 756.27L166.92 756.91L161.75 756.91M182.97 753.08L182.41 751.81L181.29 750.53L180.16 749.89L177.92 749.89L176.79 750.53L175.67 751.81L175.11 753.08L174.55 755L174.55 758.19L175.11 760.1L175.67 761.38L176.79 762.65L177.92 763.29L180.16 763.29L181.29 762.65L182.41 761.38L182.97 760.1M187.5 749.89L195.54 749.89L191.14 755L192.86 755L194.39 755.63L195.16 756.4L195.8 757.87L195.8 760.23L195.16 761.76L194.39 762.53L192.86 763.29L190.31 763.29L188.78 762.65L188.01 762.02L187.37 760.87M161.75 790.07L161.75 776.67L166.92 776.67L168.65 777.31L169.22 777.95L169.79 779.22L169.79 781.14L169.22 782.41L168.65 783.05L166.92 783.69L161.75 783.69M182.97 779.86L182.41 778.58L181.29 777.31L180.16 776.67L177.92 776.67L176.79 777.31L175.67 778.58L175.11 779.86L174.55 781.77L174.55 784.97L175.11 786.88L175.67 788.16L176.79 789.43L177.92 790.07L180.16 790.07L181.29 789.43L182.41 788.16L182.97 786.88M191.2 776.67L187.5 785.99L196.31 785.99M193.76 782.09L193.76 790.07M161.75 816.85L161.75 803.45L166.92 803.45L168.65 804.09L169.22 804.72L169.79 806L169.79 807.91L169.22 809.19L168.65 809.83L166.92 810.47L161.75 810.47M182.97 806.64L182.41 805.36L181.29 804.09L180.16 803.45L177.92 803.45L176.79 804.09L175.67 805.36L175.11 806.64L174.55 808.55L174.55 811.74L175.11 813.66L175.67 814.93L176.79 816.21L177.92 816.85L180.16 816.85L181.29 816.21L182.41 814.93L182.97 813.66M195.03 803.45L188.84 803.45L188.27 809.32L189.54 808.55L191.2 808.17L192.86 808.17L194.27 808.81L195.16 809.83L195.61 811.36L195.61 813.66L195.16 815.13L194.27 816.15L192.86 816.85L190.56 816.85L189.03 816.21L188.14 815.19M161.75 843.63L161.75 830.23L166.92 830.23L168.65 830.86L169.22 831.5L169.79 832.78L169.79 834.69L169.22 835.97L168.65 836.61L166.92 837.25L161.75 837.25M182.97 833.42L182.41 832.14L181.29 830.86L180.16 830.23L177.92 830.23L176.79 830.86L175.67 832.14L175.11 833.42L174.55 835.33L174.55 838.52L175.11 840.44L175.67 841.71L176.79 842.99L177.92 843.63L180.16 843.63L181.29 842.99L182.41 841.71L182.97 840.44M194.78 830.23L192.61 830.23L190.82 830.86L189.42 832.14L188.59 833.86L188.14 836.29L188.14 840.82L188.78 842.48L190.31 843.63L193.24 843.63L194.84 842.61L195.61 840.95L195.61 838.27L194.97 836.73L193.37 835.65L190.56 835.65L188.91 836.61L188.14 838.27M161.75 870.4L161.75 857L166.92 857L168.65 857.64L169.22 858.28L169.79 859.56L169.79 861.47L169.22 862.75L168.65 863.38L166.92 864.02L161.75 864.02M182.97 860.19L182.41 858.92L181.29 857.64L180.16 857L177.92 857L176.79 857.64L175.67 858.92L175.11 860.19L174.55 862.11L174.55 865.3L175.11 867.21L175.67 868.49L176.79 869.77L177.92 870.4L180.16 870.4L181.29 869.77L182.41 868.49L182.97 867.21M187.37 857L196.31 857L190.56 870.4M161.75 897.18L161.75 883.78L166.92 883.78L168.65 884.42L169.22 885.06L169.79 886.33L169.79 888.25L169.22 889.52L168.65 890.16L166.92 890.8L161.75 890.8M182.97 886.97L182.41 885.7L181.29 884.42L180.16 883.78L177.92 883.78L176.79 884.42L175.67 885.7L175.11 886.97L174.55 888.89L174.55 892.08L175.11 893.99L175.67 895.27L176.79 896.54L177.92 897.18L180.16 897.18L181.29 896.54L182.41 895.27L182.97 893.99M190.69 883.78L189.29 884.42L188.59 885.7L188.59 887.61L189.29 888.89L190.69 889.65L192.99 889.65L194.39 888.89L195.1 887.61L195.1 885.7L194.39 884.42L192.99 883.78L190.69 883.78M190.69 889.65L189.03 890.55L188.14 891.95L188.14 894.76L188.91 896.16L190.44 897.18L193.24 897.18L194.78 896.16L195.54 894.76L195.54 891.95L194.65 890.55L192.99 889.65M161.75 923.96L161.75 910.56L166.92 910.56L168.65 911.2L169.22 911.84L169.79 913.11L169.79 915.03L169.22 916.3L168.65 916.94L166.92 917.58L161.75 917.58M182.97 913.75L182.41 912.47L181.29 911.2L180.16 910.56L177.92 910.56L176.79 911.2L175.67 912.47L175.11 913.75L174.55 915.66L174.55 918.86L175.11 920.77L175.67 922.05L176.79 923.32L177.92 923.96L180.16 923.96L181.29 923.32L182.41 922.05L182.97 920.77M188.91 923.96L191.08 923.96L192.86 923.32L194.27 922.05L195.1 920.32L195.54 917.9L195.54 913.37L194.9 911.71L193.37 910.56L190.44 910.56L188.84 911.58L188.08 913.24L188.08 915.92L188.71 917.45L190.31 918.54L193.12 918.54L194.78 917.58L195.54 915.92M161.75 950.74L161.75 937.34L166.92 937.34L168.65 937.98L169.22 938.61L169.79 939.89L169.79 941.8L169.22 943.08L168.65 943.72L166.92 944.36L161.75 944.36M182.97 940.53L182.41 939.25L181.29 937.98L180.16 937.34L177.92 937.34L176.79 937.98L175.67 939.25L175.11 940.53L174.55 942.44L174.55 945.63L175.11 947.55L175.67 948.82L176.79 950.1L177.92 950.74L180.16 950.74L181.29 950.1L182.41 948.82L182.97 947.55M188.14 940.27L189.93 939.25L191.84 937.34L191.84 950.74M187.76 950.74L195.41 950.74M204.6 937.34L203.33 937.72L202.18 938.87L201.28 940.53L200.84 942.44L200.84 945.63L201.28 947.55L202.18 949.21L203.33 950.36L204.6 950.74L205.88 950.36L207.03 949.21L207.92 947.55L208.37 945.63L208.37 942.44L207.92 940.53L207.03 938.87L205.88 937.72L204.6 937.34M161.75 977.52L161.75 964.12L166.92 964.12L168.65 964.75L169.22 965.39L169.79 966.67L169.79 968.58L169.22 969.86L168.65 970.5L166.92 971.14L161.75 971.14M182.97 967.31L182.41 966.03L181.29 964.75L180.16 964.12L177.92 964.12L176.79 964.75L175.67 966.03L175.11 967.31L174.55 969.22L174.55 972.41L175.11 974.33L175.67 975.6L176.79 976.88L177.92 977.52L180.16 977.52L181.29 976.88L182.41 975.6L182.97 974.33M188.14 967.05L189.93 966.03L191.84 964.12L191.84 977.52M187.76 977.52L195.41 977.52M200.9 967.05L202.69 966.03L204.6 964.12L204.6 977.52M200.52 977.52L208.18 977.52M161.75 1004.29L161.75 990.89L166.92 990.89L168.65 991.53L169.22 992.17L169.79 993.45L169.79 995.36L169.22 996.64L168.65 997.27L166.92 997.91L161.75 997.91M182.97 994.08L182.41 992.81L181.29 991.53L180.16 990.89L177.92 990.89L176.79 991.53L175.67 992.81L175.11 994.08L174.55 996L174.55 999.19L175.11 1001.1L175.67 1002.38L176.79 1003.66L177.92 1004.29L180.16 1004.29L181.29 1003.66L182.41 1002.38L182.97 1001.1M188.14 993.83L189.93 992.81L191.84 990.89L191.84 1004.29M187.76 1004.29L195.41 1004.29M200.65 992.43L201.54 991.53L203.07 990.89L205.88 990.89L207.28 991.4L208.18 992.43L208.56 993.7L208.3 995.11L207.41 996.64L200.14 1004.29L208.81 1004.29M161.75 1031.07L161.75 1017.67L166.92 1017.67L168.65 1018.31L169.22 1018.95L169.79 1020.22L169.79 1022.14L169.22 1023.41L168.65 1024.05L166.92 1024.69L161.75 1024.69M182.97 1020.86L182.41 1019.59L181.29 1018.31L180.16 1017.67L177.92 1017.67L176.79 1018.31L175.67 1019.59L175.11 1020.86L174.55 1022.78L174.55 1025.97L175.11 1027.88L175.67 1029.16L176.79 1030.43L177.92 1031.07L180.16 1031.07L181.29 1030.43L182.41 1029.16L182.97 1027.88M188.14 1020.61L189.93 1019.59L191.84 1017.67L191.84 1031.07M187.76 1031.07L195.41 1031.07M200.26 1017.67L208.3 1017.67L203.9 1022.78L205.62 1022.78L207.16 1023.41L207.92 1024.18L208.56 1025.65L208.56 1028.01L207.92 1029.54L207.16 1030.31L205.62 1031.07L203.07 1031.07L201.54 1030.43L200.77 1029.8L200.14 1028.65M161.75 1057.85L161.75 1044.45L166.92 1044.45L168.65 1045.09L169.22 1045.73L169.79 1047L169.79 1048.92L169.22 1050.19L168.65 1050.83L166.92 1051.47L161.75 1051.47M182.97 1047.64L182.41 1046.36L181.29 1045.09L180.16 1044.45L177.92 1044.45L176.79 1045.09L175.67 1046.36L175.11 1047.64L174.55 1049.55L174.55 1052.75L175.11 1054.66L175.67 1055.94L176.79 1057.21L177.92 1057.85L180.16 1057.85L181.29 1057.21L182.41 1055.94L182.97 1054.66M188.14 1047.39L189.93 1046.36L191.84 1044.45L191.84 1057.85M187.76 1057.85L195.41 1057.85M203.96 1044.45L200.26 1053.77L209.07 1053.77M206.52 1049.87L206.52 1057.85M161.75 1084.63L161.75 1071.23L166.92 1071.23L168.65 1071.87L169.22 1072.5L169.79 1073.78L169.79 1075.69L169.22 1076.97L168.65 1077.61L166.92 1078.25L161.75 1078.25M182.97 1074.42L182.41 1073.14L181.29 1071.87L180.16 1071.23L177.92 1071.23L176.79 1071.87L175.67 1073.14L175.11 1074.42L174.55 1076.33L174.55 1079.52L175.11 1081.44L175.67 1082.71L176.79 1083.99L177.92 1084.63L180.16 1084.63L181.29 1083.99L182.41 1082.71L182.97 1081.44M188.14 1074.16L189.93 1073.14L191.84 1071.23L191.84 1084.63M187.76 1084.63L195.41 1084.63M207.79 1071.23L201.6 1071.23L201.03 1077.1L202.31 1076.33L203.96 1075.95L205.62 1075.95L207.03 1076.59L207.92 1077.61L208.37 1079.14L208.37 1081.44L207.92 1082.91L207.03 1083.93L205.62 1084.63L203.33 1084.63L201.8 1083.99L200.9 1082.97M622.49 254.51L622.49 241.11L627.66 241.11L629.38 241.75L629.95 242.39L630.53 243.66L630.53 245.58L629.95 246.85L629.38 247.49L627.66 248.13L622.49 248.13M634.07 254.51L638.54 241.11L643 254.51M635.6 250.04L641.47 250.04M650.66 241.11L649.38 241.49L648.24 242.64L647.34 244.3L646.9 246.21L646.9 249.41L647.34 251.32L648.24 252.98L649.38 254.13L650.66 254.51L651.94 254.13L653.09 252.98L653.98 251.32L654.43 249.41L654.43 246.21L653.98 244.3L653.09 242.64L651.94 241.49L650.66 241.11M622.49 281.29L622.49 267.89L627.66 267.89L629.38 268.53L629.95 269.16L630.53 270.44L630.53 272.35L629.95 273.63L629.38 274.27L627.66 274.91L622.49 274.91M634.07 281.29L638.54 267.89L643 281.29M635.6 276.82L641.47 276.82M646.96 270.82L648.75 269.8L650.66 267.89L650.66 281.29M646.58 281.29L654.23 281.29M455.18 296.58L453.97 295.3L452.15 294.67L449.72 294.67L447.91 295.3L446.69 296.58L446.69 297.86L447.3 299.13L447.91 299.77L449.12 300.41L452.76 301.69L453.97 302.32L454.57 302.96L455.18 304.24L455.18 306.15L453.97 307.43L452.15 308.07L449.72 308.07L447.91 307.43L446.69 306.15M462.58 294.67L462.58 308.07M458.74 294.67L466.42 294.67M470.89 294.67L470.89 308.07M470.89 308.07L477.24 308.07M481.73 308.07L481.73 294.67M487.76 308.07L487.76 294.67L495.8 308.07L495.8 294.67M501.89 294.67L501.89 308.07M509.93 294.67L501.89 303.6M504.76 300.41L509.93 308.07M512.19 309.98L523.04 309.98M525.4 294.67L525.4 304.24L525.98 306.15L527.13 307.43L528.85 308.07L530 308.07L531.72 307.43L532.87 306.15L533.44 304.24L533.44 294.67M537.72 308.07L542.18 294.67L546.65 308.07M539.25 303.6L545.12 303.6M551.19 308.07L551.19 294.67L555.95 294.67L557.54 295.3L558.07 295.94L558.6 297.22L558.6 298.49L558.07 299.77L557.54 300.41L555.95 301.05L551.19 301.05M554.89 301.05L558.6 308.07M566.59 294.67L566.59 308.07M562.75 294.67L570.43 294.67M571.86 309.98L582.7 309.98M587.33 294.67L587.33 308.07M583.49 294.67L591.17 294.67M594.51 294.67L603.44 308.07M603.44 294.67L594.51 308.07M618.12 293.39L606.63 311.89M622.49 308.07L622.49 294.67L627.66 294.67L629.38 295.3L629.95 295.94L630.53 297.22L630.53 299.13L629.95 300.41L629.38 301.05L627.66 301.69L622.49 301.69M634.07 308.07L638.54 294.67L643 308.07M635.6 303.6L641.47 303.6M646.7 296.2L647.6 295.3L649.13 294.67L651.94 294.67L653.34 295.18L654.23 296.2L654.62 297.47L654.36 298.88L653.47 300.41L646.19 308.07L654.87 308.07M452.31 323.36L451.1 322.08L449.28 321.44L446.85 321.44L445.03 322.08L443.82 323.36L443.82 324.63L444.43 325.91L445.03 326.55L446.25 327.19L449.88 328.46L451.1 329.1L451.7 329.74L452.31 331.02L452.31 332.93L451.1 334.21L449.28 334.84L446.85 334.84L445.03 334.21L443.82 332.93M459.71 321.44L459.71 334.84M455.87 321.44L463.55 321.44M468.02 321.44L468.02 334.84M468.02 334.84L474.37 334.84M478.85 334.84L478.85 321.44M484.88 334.84L484.88 321.44L492.92 334.84L492.92 321.44M499.02 321.44L499.02 334.84M507.06 321.44L499.02 330.38M501.89 327.19L507.06 334.84M509.32 336.76L520.17 336.76M522.53 321.44L522.53 331.02L523.11 332.93L524.25 334.21L525.98 334.84L527.13 334.84L528.85 334.21L530 332.93L530.57 331.02L530.57 321.44M534.85 334.84L539.31 321.44L543.78 334.84M536.38 330.38L542.25 330.38M548.31 334.84L548.31 321.44L553.08 321.44L554.67 322.08L555.2 322.72L555.73 324L555.73 325.27L555.2 326.55L554.67 327.19L553.08 327.82L548.31 327.82M552.02 327.82L555.73 334.84M563.72 321.44L563.72 334.84M559.88 321.44L567.56 321.44M568.98 336.76L579.83 336.76M582.45 334.84L582.45 321.44L587.22 321.44L588.81 322.08L589.34 322.72L589.87 324L589.87 325.27L589.34 326.55L588.81 327.19L587.22 327.82L582.45 327.82M586.16 327.82L589.87 334.84M594.51 321.44L603.44 334.84M603.44 321.44L594.51 334.84M618.12 320.17L606.63 338.67M622.49 334.84L622.49 321.44L627.66 321.44L629.38 322.08L629.95 322.72L630.53 324L630.53 325.91L629.95 327.19L629.38 327.82L627.66 328.46L622.49 328.46M634.07 334.84L638.54 321.44L643 334.84M635.6 330.38L641.47 330.38M646.32 321.44L654.36 321.44L649.96 326.55L651.68 326.55L653.21 327.19L653.98 327.95L654.62 329.42L654.62 331.78L653.98 333.31L653.21 334.08L651.68 334.84L649.13 334.84L647.6 334.21L646.83 333.57L646.19 332.42M622.49 361.62L622.49 348.22L627.66 348.22L629.38 348.86L629.95 349.5L630.53 350.77L630.53 352.69L629.95 353.96L629.38 354.6L627.66 355.24L622.49 355.24M634.07 361.62L638.54 348.22L643 361.62M635.6 357.16L641.47 357.16M650.02 348.22L646.32 357.54L655.13 357.54M652.58 353.65L652.58 361.62M622.49 388.4L622.49 375L627.66 375L629.38 375.64L629.95 376.28L630.53 377.55L630.53 379.47L629.95 380.74L629.38 381.38L627.66 382.02L622.49 382.02M634.07 388.4L638.54 375L643 388.4M635.6 383.93L641.47 383.93M653.85 375L647.66 375L647.09 380.87L648.36 380.1L650.02 379.72L651.68 379.72L653.09 380.36L653.98 381.38L654.43 382.91L654.43 385.21L653.98 386.68L653.09 387.7L651.68 388.4L649.38 388.4L647.85 387.76L646.96 386.74M622.49 415.18L622.49 401.78L627.66 401.78L629.38 402.42L629.95 403.05L630.53 404.33L630.53 406.24L629.95 407.52L629.38 408.16L627.66 408.8L622.49 408.8M634.07 415.18L638.54 401.78L643 415.18M635.6 410.71L641.47 410.71M653.6 401.78L651.43 401.78L649.64 402.42L648.24 403.69L647.41 405.42L646.96 407.84L646.96 412.37L647.6 414.03L649.13 415.18L652.06 415.18L653.66 414.16L654.43 412.5L654.43 409.82L653.79 408.29L652.19 407.2L649.38 407.2L647.73 408.16L646.96 409.82M622.49 441.96L622.49 428.56L627.66 428.56L629.38 429.19L629.95 429.83L630.53 431.11L630.53 433.02L629.95 434.3L629.38 434.94L627.66 435.58L622.49 435.58M634.07 441.96L638.54 428.56L643 441.96M635.6 437.49L641.47 437.49M646.19 428.56L655.13 428.56L649.38 441.96M622.49 468.73L622.49 455.33L627.66 455.33L629.38 455.97L629.95 456.61L630.53 457.89L630.53 459.8L629.95 461.08L629.38 461.71L627.66 462.35L622.49 462.35M634.07 468.73L638.54 455.33L643 468.73M635.6 464.27L641.47 464.27M649.51 455.33L648.11 455.97L647.41 457.25L647.41 459.16L648.11 460.44L649.51 461.2L651.81 461.2L653.21 460.44L653.92 459.16L653.92 457.25L653.21 455.97L651.81 455.33L649.51 455.33M649.51 461.2L647.85 462.1L646.96 463.5L646.96 466.31L647.73 467.71L649.26 468.73L652.06 468.73L653.6 467.71L654.36 466.31L654.36 463.5L653.47 462.1L651.81 461.2M622.49 495.51L622.49 482.11L627.66 482.11L629.38 482.75L629.95 483.39L630.53 484.66L630.53 486.58L629.95 487.85L629.38 488.49L627.66 489.13L622.49 489.13M634.07 495.51L638.54 482.11L643 495.51M635.6 491.05L641.47 491.05M647.73 495.51L649.9 495.51L651.68 494.87L653.09 493.6L653.92 491.87L654.36 489.45L654.36 484.92L653.72 483.26L652.19 482.11L649.26 482.11L647.66 483.13L646.9 484.79L646.9 487.47L647.53 489L649.13 490.09L651.94 490.09L653.6 489.13L654.36 487.47M609.73 522.29L609.73 508.89L614.9 508.89L616.62 509.53L617.19 510.17L617.77 511.44L617.77 513.36L617.19 514.63L616.62 515.27L614.9 515.91L609.73 515.91M621.31 522.29L625.78 508.89L630.24 522.29M622.84 517.82L628.71 517.82M634.2 511.83L635.98 510.8L637.9 508.89L637.9 522.29M633.82 522.29L641.47 522.29M650.66 508.89L649.38 509.27L648.24 510.42L647.34 512.08L646.9 513.99L646.9 517.19L647.34 519.1L648.24 520.76L649.38 521.91L650.66 522.29L651.94 521.91L653.09 520.76L653.98 519.1L654.43 517.19L654.43 513.99L653.98 512.08L653.09 510.42L651.94 509.27L650.66 508.89M609.73 549.07L609.73 535.67L614.9 535.67L616.62 536.31L617.19 536.94L617.77 538.22L617.77 540.13L617.19 541.41L616.62 542.05L614.9 542.69L609.73 542.69M621.31 549.07L625.78 535.67L630.24 549.07M622.84 544.6L628.71 544.6M634.2 538.6L635.98 537.58L637.9 535.67L637.9 549.07M633.82 549.07L641.47 549.07M646.96 538.6L648.75 537.58L650.66 535.67L650.66 549.07M646.58 549.07L654.23 549.07M609.73 575.85L609.73 562.45L614.9 562.45L616.62 563.08L617.19 563.72L617.77 565L617.77 566.91L617.19 568.19L616.62 568.83L614.9 569.47L609.73 569.47M621.31 575.85L625.78 562.45L630.24 575.85M622.84 571.38L628.71 571.38M634.2 565.38L635.98 564.36L637.9 562.45L637.9 575.85M633.82 575.85L641.47 575.85M646.7 563.98L647.6 563.08L649.13 562.45L651.94 562.45L653.34 562.96L654.23 563.98L654.62 565.25L654.36 566.66L653.47 568.19L646.19 575.85L654.87 575.85M486.77 591.14L485.55 589.86L483.74 589.22L481.31 589.22L479.49 589.86L478.28 591.14L478.28 592.41L478.89 593.69L479.49 594.33L480.7 594.97L484.34 596.24L485.55 596.88L486.16 597.52L486.77 598.8L486.77 600.71L485.55 601.99L483.74 602.62L481.31 602.62L479.49 601.99L478.28 600.71M494.17 589.22L494.17 602.62M490.33 589.22L498.01 589.22M502.47 589.22L502.47 602.62M502.47 602.62L508.83 602.62M513.31 602.62L513.31 589.22M519.34 602.62L519.34 589.22L527.38 602.62L527.38 589.22M533.47 589.22L533.47 602.62M541.51 589.22L533.47 598.16M536.35 594.97L541.51 602.62M543.78 604.54L554.63 604.54M559.25 589.22L559.25 602.62M555.41 589.22L563.1 589.22M567.33 602.62L567.33 589.22L572.18 598.8L577.02 589.22L577.02 602.62M590.46 591.14L589.24 589.86L587.43 589.22L585 589.22L583.18 589.86L581.97 591.14L581.97 592.41L582.58 593.69L583.18 594.33L584.39 594.97L588.03 596.24L589.24 596.88L589.85 597.52L590.46 598.8L590.46 600.71L589.24 601.99L587.43 602.62L585 602.62L583.18 601.99L581.97 600.71M605.36 587.95L593.87 606.45M609.73 602.62L609.73 589.22L614.9 589.22L616.62 589.86L617.19 590.5L617.77 591.78L617.77 593.69L617.19 594.97L616.62 595.6L614.9 596.24L609.73 596.24M621.31 602.62L625.78 589.22L630.24 602.62M622.84 598.16L628.71 598.16M634.2 592.16L635.98 591.14L637.9 589.22L637.9 602.62M633.82 602.62L641.47 602.62M646.32 589.22L654.36 589.22L649.96 594.33L651.68 594.33L653.21 594.97L653.98 595.73L654.62 597.2L654.62 599.56L653.98 601.09L653.21 601.86L651.68 602.62L649.13 602.62L647.6 601.99L646.83 601.35L646.19 600.2M488.04 617.92L486.83 616.64L485.01 616L482.59 616L480.77 616.64L479.56 617.92L479.56 619.19L480.16 620.47L480.77 621.11L481.98 621.74L485.62 623.02L486.83 623.66L487.44 624.3L488.04 625.57L488.04 627.49L486.83 628.76L485.01 629.4L482.59 629.4L480.77 628.76L479.56 627.49M495.44 616L495.44 629.4M491.6 616L499.29 616M503.75 616L503.75 629.4M503.75 629.4L510.1 629.4M514.59 629.4L514.59 616M520.62 629.4L520.62 616L528.66 629.4L528.66 616M534.75 616L534.75 629.4M542.79 616L534.75 624.94M537.62 621.74L542.79 629.4M545.06 631.32L555.9 631.32M560.53 616L560.53 629.4M556.69 616L564.37 616M576.71 619.19L576.14 617.92L575.02 616.64L573.9 616L571.65 616L570.53 616.64L569.41 617.92L568.84 619.19L568.28 621.11L568.28 624.3L568.84 626.21L569.41 627.49L570.53 628.76L571.65 629.4L573.9 629.4L575.02 628.76L576.14 627.49L576.71 626.21M582.29 616L582.29 629.4M590.33 616L582.29 624.94M585.16 621.74L590.33 629.4M605.36 614.73L593.87 633.23M609.73 629.4L609.73 616L614.9 616L616.62 616.64L617.19 617.28L617.77 618.55L617.77 620.47L617.19 621.74L616.62 622.38L614.9 623.02L609.73 623.02M621.31 629.4L625.78 616L630.24 629.4M622.84 624.94L628.71 624.94M634.2 618.94L635.98 617.92L637.9 616L637.9 629.4M633.82 629.4L641.47 629.4M650.02 616L646.32 625.32L655.13 625.32M652.58 621.43L652.58 629.4M609.73 656.18L609.73 642.78L614.9 642.78L616.62 643.42L617.19 644.06L617.77 645.33L617.77 647.25L617.19 648.52L616.62 649.16L614.9 649.8L609.73 649.8M621.31 656.18L625.78 642.78L630.24 656.18M622.84 651.71L628.71 651.71M634.2 645.72L635.98 644.69L637.9 642.78L637.9 656.18M633.82 656.18L641.47 656.18M653.85 642.78L647.66 642.78L647.09 648.65L648.36 647.88L650.02 647.5L651.68 647.5L653.09 648.14L653.98 649.16L654.43 650.69L654.43 652.99L653.98 654.46L653.09 655.48L651.68 656.18L649.38 656.18L647.85 655.54L646.96 654.52M620.57 709.74L620.57 696.34L625.74 696.34L627.47 696.97L628.04 697.61L628.61 698.89L628.61 700.8L628.04 702.08L627.47 702.72L625.74 703.36L620.57 703.36M634.26 696.34L634.26 709.74M634.26 696.34L638.86 696.34L640.39 696.97L640.9 697.61L641.41 698.89L641.41 700.16L640.9 701.44L640.39 702.08L638.86 702.72M634.26 702.72L638.86 702.72L640.39 703.36L640.9 703.99L641.41 705.27L641.41 707.18L640.9 708.46L640.39 709.1L638.86 709.74L634.26 709.74M650.66 696.34L649.38 696.72L648.24 697.87L647.34 699.53L646.9 701.44L646.9 704.63L647.34 706.55L648.24 708.2L649.38 709.35L650.66 709.74L651.94 709.35L653.09 708.2L653.98 706.55L654.43 704.63L654.43 701.44L653.98 699.53L653.09 697.87L651.94 696.72L650.66 696.34M620.57 736.51L620.57 723.11L625.74 723.11L627.47 723.75L628.04 724.39L628.61 725.67L628.61 727.58L628.04 728.86L627.47 729.49L625.74 730.13L620.57 730.13M634.26 723.11L634.26 736.51M634.26 723.11L638.86 723.11L640.39 723.75L640.9 724.39L641.41 725.67L641.41 726.94L640.9 728.22L640.39 728.86L638.86 729.49M634.26 729.49L638.86 729.49L640.39 730.13L640.9 730.77L641.41 732.05L641.41 733.96L640.9 735.24L640.39 735.88L638.86 736.51L634.26 736.51M646.96 726.05L648.75 725.03L650.66 723.11L650.66 736.51M646.58 736.51L654.23 736.51M620.57 763.29L620.57 749.89L625.74 749.89L627.47 750.53L628.04 751.17L628.61 752.44L628.61 754.36L628.04 755.63L627.47 756.27L625.74 756.91L620.57 756.91M634.26 749.89L634.26 763.29M634.26 749.89L638.86 749.89L640.39 750.53L640.9 751.17L641.41 752.44L641.41 753.72L640.9 755L640.39 755.63L638.86 756.27M634.26 756.27L638.86 756.27L640.39 756.91L640.9 757.55L641.41 758.83L641.41 760.74L640.9 762.02L640.39 762.65L638.86 763.29L634.26 763.29M646.7 751.42L647.6 750.53L649.13 749.89L651.94 749.89L653.34 750.4L654.23 751.42L654.62 752.7L654.36 754.1L653.47 755.63L646.19 763.29L654.87 763.29M494.1 778.58L492.89 777.31L491.07 776.67L488.65 776.67L486.83 777.31L485.62 778.58L485.62 779.86L486.22 781.14L486.83 781.77L488.04 782.41L491.68 783.69L492.89 784.33L493.5 784.97L494.1 786.24L494.1 788.16L492.89 789.43L491.07 790.07L488.65 790.07L486.83 789.43L485.62 788.16M501.51 776.67L501.51 790.07M497.66 776.67L505.35 776.67M509.81 776.67L509.81 790.07M509.81 790.07L516.17 790.07M520.65 790.07L520.65 776.67M526.68 790.07L526.68 776.67L534.72 790.07L534.72 776.67M540.81 776.67L540.81 790.07M548.85 776.67L540.81 785.6M543.68 782.41L548.85 790.07M551.12 791.98L561.97 791.98M571.95 778.58L570.74 777.31L568.92 776.67L566.5 776.67L564.68 777.31L563.47 778.58L563.47 779.86L564.07 781.14L564.68 781.77L565.89 782.41L569.53 783.69L570.74 784.33L571.35 784.97L571.95 786.24L571.95 788.16L570.74 789.43L568.92 790.07L566.5 790.07L564.68 789.43L563.47 788.16M576 776.67L578.88 790.07L581.75 779.86L584.62 790.07L587.49 776.67M595.66 776.67L594.53 777.12L593.51 778.2L592.75 779.73L592.34 781.46L592.34 785.28L592.75 787.01L593.51 788.54L594.53 789.62L595.66 790.07L597.19 790.07L598.31 789.62L599.33 788.54L600.1 787.01L600.51 785.28L600.51 781.46L600.1 779.73L599.33 778.2L598.31 777.12L597.19 776.67L595.66 776.67M616.2 775.39L604.72 793.9M620.57 790.07L620.57 776.67L625.74 776.67L627.47 777.31L628.04 777.95L628.61 779.22L628.61 781.14L628.04 782.41L627.47 783.05L625.74 783.69L620.57 783.69M634.26 776.67L634.26 790.07M634.26 776.67L638.86 776.67L640.39 777.31L640.9 777.95L641.41 779.22L641.41 780.5L640.9 781.77L640.39 782.41L638.86 783.05M634.26 783.05L638.86 783.05L640.39 783.69L640.9 784.33L641.41 785.6L641.41 787.52L640.9 788.79L640.39 789.43L638.86 790.07L634.26 790.07M646.32 776.67L654.36 776.67L649.96 781.77L651.68 781.77L653.21 782.41L653.98 783.18L654.62 784.65L654.62 787.01L653.98 788.54L653.21 789.3L651.68 790.07L649.13 790.07L647.6 789.43L646.83 788.79L646.19 787.65M620.57 816.85L620.57 803.45L625.74 803.45L627.47 804.09L628.04 804.72L628.61 806L628.61 807.91L628.04 809.19L627.47 809.83L625.74 810.47L620.57 810.47M634.26 803.45L634.26 816.85M634.26 803.45L638.86 803.45L640.39 804.09L640.9 804.72L641.41 806L641.41 807.28L640.9 808.55L640.39 809.19L638.86 809.83M634.26 809.83L638.86 809.83L640.39 810.47L640.9 811.11L641.41 812.38L641.41 814.3L640.9 815.57L640.39 816.21L638.86 816.85L634.26 816.85M650.02 803.45L646.32 812.76L655.13 812.76M652.58 808.87L652.58 816.85M620.57 843.63L620.57 830.23L625.74 830.23L627.47 830.86L628.04 831.5L628.61 832.78L628.61 834.69L628.04 835.97L627.47 836.61L625.74 837.25L620.57 837.25M634.26 830.23L634.26 843.63M634.26 830.23L638.86 830.23L640.39 830.86L640.9 831.5L641.41 832.78L641.41 834.05L640.9 835.33L640.39 835.97L638.86 836.61M634.26 836.61L638.86 836.61L640.39 837.25L640.9 837.88L641.41 839.16L641.41 841.07L640.9 842.35L640.39 842.99L638.86 843.63L634.26 843.63M653.85 830.23L647.66 830.23L647.09 836.1L648.36 835.33L650.02 834.95L651.68 834.95L653.09 835.59L653.98 836.61L654.43 838.14L654.43 840.44L653.98 841.9L653.09 842.92L651.68 843.63L649.38 843.63L647.85 842.99L646.96 841.97M620.57 870.4L620.57 857L625.74 857L627.47 857.64L628.04 858.28L628.61 859.56L628.61 861.47L628.04 862.75L627.47 863.38L625.74 864.02L620.57 864.02M634.26 857L634.26 870.4M634.26 857L638.86 857L640.39 857.64L640.9 858.28L641.41 859.56L641.41 860.83L640.9 862.11L640.39 862.75L638.86 863.38M634.26 863.38L638.86 863.38L640.39 864.02L640.9 864.66L641.41 865.94L641.41 867.85L640.9 869.13L640.39 869.77L638.86 870.4L634.26 870.4M653.6 857L651.43 857L649.64 857.64L648.24 858.92L647.41 860.64L646.96 863.07L646.96 867.6L647.6 869.26L649.13 870.4L652.06 870.4L653.66 869.38L654.43 867.72L654.43 865.04L653.79 863.51L652.19 862.43L649.38 862.43L647.73 863.38L646.96 865.04M620.57 897.18L620.57 883.78L625.74 883.78L627.47 884.42L628.04 885.06L628.61 886.33L628.61 888.25L628.04 889.52L627.47 890.16L625.74 890.8L620.57 890.8M634.26 883.78L634.26 897.18M634.26 883.78L638.86 883.78L640.39 884.42L640.9 885.06L641.41 886.33L641.41 887.61L640.9 888.89L640.39 889.52L638.86 890.16M634.26 890.16L638.86 890.16L640.39 890.8L640.9 891.44L641.41 892.72L641.41 894.63L640.9 895.91L640.39 896.54L638.86 897.18L634.26 897.18M646.19 883.78L655.13 883.78L649.38 897.18M620.57 923.96L620.57 910.56L625.74 910.56L627.47 911.2L628.04 911.84L628.61 913.11L628.61 915.03L628.04 916.3L627.47 916.94L625.74 917.58L620.57 917.58M634.26 910.56L634.26 923.96M634.26 910.56L638.86 910.56L640.39 911.2L640.9 911.84L641.41 913.11L641.41 914.39L640.9 915.66L640.39 916.3L638.86 916.94M634.26 916.94L638.86 916.94L640.39 917.58L640.9 918.22L641.41 919.49L641.41 921.41L640.9 922.68L640.39 923.32L638.86 923.96L634.26 923.96M649.51 910.56L648.11 911.2L647.41 912.47L647.41 914.39L648.11 915.66L649.51 916.43L651.81 916.43L653.21 915.66L653.92 914.39L653.92 912.47L653.21 911.2L651.81 910.56L649.51 910.56M649.51 916.43L647.85 917.32L646.96 918.73L646.96 921.54L647.73 922.94L649.26 923.96L652.06 923.96L653.6 922.94L654.36 921.54L654.36 918.73L653.47 917.32L651.81 916.43M620.57 950.74L620.57 937.34L625.74 937.34L627.47 937.98L628.04 938.61L628.61 939.89L628.61 941.8L628.04 943.08L627.47 943.72L625.74 944.36L620.57 944.36M634.26 937.34L634.26 950.74M634.26 937.34L638.86 937.34L640.39 937.98L640.9 938.61L641.41 939.89L641.41 941.17L640.9 942.44L640.39 943.08L638.86 943.72M634.26 943.72L638.86 943.72L640.39 944.36L640.9 945L641.41 946.27L641.41 948.19L640.9 949.46L640.39 950.1L638.86 950.74L634.26 950.74M647.73 950.74L649.9 950.74L651.68 950.1L653.09 948.82L653.92 947.1L654.36 944.68L654.36 940.15L653.72 938.49L652.19 937.34L649.26 937.34L647.66 938.36L646.9 940.02L646.9 942.7L647.53 944.23L649.13 945.31L651.94 945.31L653.6 944.36L654.36 942.7M607.81 977.52L607.81 964.12L612.98 964.12L614.7 964.75L615.28 965.39L615.85 966.67L615.85 968.58L615.28 969.86L614.7 970.5L612.98 971.14L607.81 971.14M621.5 964.12L621.5 977.52M621.5 964.12L626.09 964.12L627.63 964.75L628.14 965.39L628.65 966.67L628.65 967.94L628.14 969.22L627.63 969.86L626.09 970.5M621.5 970.5L626.09 970.5L627.63 971.14L628.14 971.77L628.65 973.05L628.65 974.96L628.14 976.24L627.63 976.88L626.09 977.52L621.5 977.52M634.2 967.05L635.98 966.03L637.9 964.12L637.9 977.52M633.82 977.52L641.47 977.52M650.66 964.12L649.38 964.5L648.24 965.65L647.34 967.31L646.9 969.22L646.9 972.41L647.34 974.33L648.24 975.98L649.38 977.13L650.66 977.52L651.94 977.13L653.09 975.98L653.98 974.33L654.43 972.41L654.43 969.22L653.98 967.31L653.09 965.65L651.94 964.5L650.66 964.12M607.81 1004.29L607.81 990.89L612.98 990.89L614.7 991.53L615.28 992.17L615.85 993.45L615.85 995.36L615.28 996.64L614.7 997.27L612.98 997.91L607.81 997.91M621.5 990.89L621.5 1004.29M621.5 990.89L626.09 990.89L627.63 991.53L628.14 992.17L628.65 993.45L628.65 994.72L628.14 996L627.63 996.64L626.09 997.27M621.5 997.27L626.09 997.27L627.63 997.91L628.14 998.55L628.65 999.83L628.65 1001.74L628.14 1003.02L627.63 1003.66L626.09 1004.29L621.5 1004.29M634.2 993.83L635.98 992.81L637.9 990.89L637.9 1004.29M633.82 1004.29L641.47 1004.29M646.7 992.43L647.6 991.53L649.13 990.89L651.94 990.89L653.34 991.4L654.23 992.43L654.62 993.7L654.36 995.11L653.47 996.64L646.19 1004.29L654.87 1004.29M607.81 1031.07L607.81 1017.67L612.98 1017.67L614.7 1018.31L615.28 1018.95L615.85 1020.22L615.85 1022.14L615.28 1023.41L614.7 1024.05L612.98 1024.69L607.81 1024.69M621.5 1017.67L621.5 1031.07M621.5 1017.67L626.09 1017.67L627.63 1018.31L628.14 1018.95L628.65 1020.22L628.65 1021.5L628.14 1022.78L627.63 1023.41L626.09 1024.05M621.5 1024.05L626.09 1024.05L627.63 1024.69L628.14 1025.33L628.65 1026.61L628.65 1028.52L628.14 1029.8L627.63 1030.43L626.09 1031.07L621.5 1031.07M634.2 1020.61L635.98 1019.59L637.9 1017.67L637.9 1031.07M633.82 1031.07L641.47 1031.07M646.32 1017.67L654.36 1017.67L649.96 1022.78L651.68 1022.78L653.21 1023.41L653.98 1024.18L654.62 1025.65L654.62 1028.01L653.98 1029.54L653.21 1030.31L651.68 1031.07L649.13 1031.07L647.6 1030.43L646.83 1029.8L646.19 1028.65M607.81 1057.85L607.81 1044.45L612.98 1044.45L614.7 1045.09L615.28 1045.73L615.85 1047L615.85 1048.92L615.28 1050.19L614.7 1050.83L612.98 1051.47L607.81 1051.47M621.5 1044.45L621.5 1057.85M621.5 1044.45L626.09 1044.45L627.63 1045.09L628.14 1045.73L628.65 1047L628.65 1048.28L628.14 1049.55L627.63 1050.19L626.09 1050.83M621.5 1050.83L626.09 1050.83L627.63 1051.47L628.14 1052.11L628.65 1053.38L628.65 1055.3L628.14 1056.57L627.63 1057.21L626.09 1057.85L621.5 1057.85M634.2 1047.39L635.98 1046.36L637.9 1044.45L637.9 1057.85M633.82 1057.85L641.47 1057.85M650.02 1044.45L646.32 1053.77L655.13 1053.77M652.58 1049.87L652.58 1057.85M607.81 1084.63L607.81 1071.23L612.98 1071.23L614.7 1071.87L615.28 1072.5L615.85 1073.78L615.85 1075.69L615.28 1076.97L614.7 1077.61L612.98 1078.25L607.81 1078.25M621.5 1071.23L621.5 1084.63M621.5 1071.23L626.09 1071.23L627.63 1071.87L628.14 1072.5L628.65 1073.78L628.65 1075.06L628.14 1076.33L627.63 1076.97L626.09 1077.61M621.5 1077.61L626.09 1077.61L627.63 1078.25L628.14 1078.89L628.65 1080.16L628.65 1082.08L628.14 1083.35L627.63 1083.99L626.09 1084.63L621.5 1084.63M634.2 1074.16L635.98 1073.14L637.9 1071.23L637.9 1084.63M633.82 1084.63L641.47 1084.63M653.85 1071.23L647.66 1071.23L647.09 1077.1L648.36 1076.33L650.02 1075.95L651.68 1075.95L653.09 1076.59L653.98 1077.61L654.43 1079.14L654.43 1081.44L653.98 1082.91L653.09 1083.93L651.68 1084.63L649.38 1084.63L647.85 1083.99L646.96 1082.97M239.33 196.89L252.73 192.39L239.33 187.9M239.33 183.52L252.73 183.52M239.33 183.52L239.33 179.68L239.97 178.03L241.25 176.93L242.52 176.38L244.44 175.83L247.63 175.83L249.54 176.38L250.82 176.93L252.09 178.03L252.73 179.68L252.73 183.52M239.33 170.12L252.73 170.12M239.33 170.12L239.33 166.28L239.97 164.63L241.25 163.53L242.52 162.98L244.44 162.43L247.63 162.43L249.54 162.98L250.82 163.53L252.09 164.63L252.73 166.28L252.73 170.12M266.08 193L279.48 193M266.08 193L266.08 186.28M272.46 193L272.46 188.09M279.48 193L279.48 186.28M266.08 174.53L266.08 180.72L271.95 181.29L271.19 180.01L270.8 178.35L270.8 176.7L271.44 175.29L272.46 174.4L274 173.95L276.29 173.95L277.76 174.4L278.78 175.29L279.48 176.7L279.48 178.99L278.84 180.52L277.82 181.42M266.08 170.09L279.48 165.59L266.08 161.1M306.23 213.93L292.83 213.93M292.83 204.64L293.28 205.77L294.36 206.79L295.9 207.55L297.62 207.96L301.45 207.96L303.17 207.55L304.7 206.79L305.79 205.77L306.23 204.64L306.23 203.11L305.79 201.99L304.7 200.97L303.17 200.2L301.45 199.79L297.62 199.79L295.9 200.2L294.36 200.97L293.28 201.99L292.83 203.11L292.83 204.64M306.23 193.6L292.83 193.6L292.83 188.84L293.47 187.25L294.11 186.72L295.39 186.19L296.66 186.19L297.94 186.72L298.58 187.25L299.21 188.84L299.21 193.6M299.21 189.89L306.23 186.19M292.83 180.24L306.23 180.24M292.83 180.24L292.83 173.52M299.21 180.24L299.21 175.33M306.23 180.24L306.23 173.52M292.83 168.18L306.23 168.18M292.83 168.18L292.83 161.46M299.21 168.18L299.21 163.27M321.82 205.15L332.66 205.15M327.24 210.58L327.24 199.73M319.58 194.82L319.58 186.78L324.69 191.18L324.69 189.46L325.33 187.93L326.09 187.16L327.56 186.52L329.92 186.52L331.45 187.16L332.22 187.93L332.98 189.46L332.98 192.01L332.34 193.54L331.71 194.31L330.56 194.95M319.58 182.85L332.98 178.35L319.58 173.86M319.58 170.57L319.58 162.53L324.69 166.93L324.69 165.21L325.33 163.68L326.09 162.91L327.56 162.27L329.92 162.27L331.45 162.91L332.22 163.68L332.98 165.21L332.98 167.76L332.34 169.29L331.71 170.06L330.56 170.7M348.57 192.39L359.41 192.39M353.99 197.82L353.99 186.97M346.33 174.53L346.33 180.72L352.2 181.29L351.44 180.01L351.05 178.35L351.05 176.7L351.69 175.29L352.71 174.4L354.25 173.95L356.54 173.95L358.01 174.4L359.03 175.29L359.73 176.7L359.73 178.99L359.09 180.52L358.07 181.42M346.33 170.09L359.73 165.59L346.33 161.1M373.08 190.19L386.48 185.69L373.08 181.2M386.48 176.92L373.08 176.92M386.48 170.89L373.08 170.89L386.48 162.85L373.08 162.85M399.83 205.5L413.23 201.01L399.83 196.51M399.83 191.88L413.23 191.88M399.83 191.88L399.83 187.29L400.47 185.76L401.11 185.25L402.39 184.74L403.66 184.74L404.94 185.25L405.58 185.76L406.21 187.29M406.21 191.88L406.21 187.29L406.85 185.76L407.49 185.25L408.77 184.74L410.68 184.74L411.96 185.25L412.59 185.76L413.23 187.29L413.23 191.88M413.23 180.59L399.83 176.12L413.23 171.65M408.77 179.06L408.77 173.19M399.83 165.11L413.23 165.11M399.83 168.96L399.83 161.27M426.58 195.14L436.15 195.14L438.07 194.56L439.34 193.41L439.98 191.69L439.98 190.54L439.34 188.82L438.07 187.67L436.15 187.1L426.58 187.1M426.58 174.53L426.58 180.72L432.45 181.29L431.69 180.01L431.3 178.35L431.3 176.7L431.94 175.29L432.96 174.4L434.5 173.95L436.79 173.95L438.26 174.4L439.28 175.29L439.98 176.7L439.98 178.99L439.34 180.52L438.32 181.42M426.58 170.09L439.98 165.59L426.58 161.1M546.98 208.35L533.58 203.88L546.98 199.41M542.52 206.81L542.52 200.94M533.58 196.89L546.98 192.39L533.58 187.9M533.58 183.52L546.98 183.52M533.58 183.52L533.58 179.68L534.22 178.03L535.5 176.93L536.77 176.38L538.69 175.83L541.88 175.83L543.79 176.38L545.07 176.93L546.34 178.03L546.98 179.68L546.98 183.52M533.58 170.12L546.98 170.12M533.58 170.12L533.58 166.28L534.22 164.63L535.5 163.53L536.77 162.98L538.69 162.43L541.88 162.43L543.79 162.98L545.07 163.53L546.34 164.63L546.98 166.28L546.98 170.12M242.52 1129.19L241.25 1129.75L239.97 1130.87L239.33 1132L239.33 1134.24L239.97 1135.37L241.25 1136.49L242.52 1137.05L244.44 1137.61L247.63 1137.61L249.54 1137.05L250.82 1136.49L252.09 1135.37L252.73 1134.24L252.73 1132L252.09 1130.87L250.82 1129.75L249.54 1129.19L247.63 1129.19M247.63 1132L247.63 1129.19M252.73 1123.7L239.33 1123.7L252.73 1115.66L239.33 1115.66M239.33 1109.53L252.73 1109.53M239.33 1109.53L239.33 1105.69L239.97 1104.04L241.25 1102.94L242.52 1102.39L244.44 1101.85L247.63 1101.85L249.54 1102.39L250.82 1102.94L252.09 1104.04L252.73 1105.69L252.73 1109.53M269.27 1129.19L268 1129.75L266.72 1130.87L266.08 1132L266.08 1134.24L266.72 1135.37L268 1136.49L269.27 1137.05L271.19 1137.61L274.38 1137.61L276.29 1137.05L277.57 1136.49L278.84 1135.37L279.48 1134.24L279.48 1132L278.84 1130.87L277.57 1129.75L276.29 1129.19L274.38 1129.19M274.38 1132L274.38 1129.19M279.48 1123.7L266.08 1123.7L279.48 1115.66L266.08 1115.66M266.08 1109.53L279.48 1109.53M266.08 1109.53L266.08 1105.69L266.72 1104.04L268 1102.94L269.27 1102.39L271.19 1101.85L274.38 1101.85L276.29 1102.39L277.57 1102.94L278.84 1104.04L279.48 1105.69L279.48 1109.53M296.02 1129.19L294.75 1129.75L293.47 1130.87L292.83 1132L292.83 1134.24L293.47 1135.37L294.75 1136.49L296.02 1137.05L297.94 1137.61L301.13 1137.61L303.04 1137.05L304.32 1136.49L305.59 1135.37L306.23 1134.24L306.23 1132L305.59 1130.87L304.32 1129.75L303.04 1129.19L301.13 1129.19M301.13 1132L301.13 1129.19M306.23 1123.7L292.83 1123.7L306.23 1115.66L292.83 1115.66M292.83 1109.53L306.23 1109.53M292.83 1109.53L292.83 1105.69L293.47 1104.04L294.75 1102.94L296.02 1102.39L297.94 1101.85L301.13 1101.85L303.04 1102.39L304.32 1102.94L305.59 1104.04L306.23 1105.69L306.23 1109.53M322.77 1129.19L321.5 1129.75L320.22 1130.87L319.58 1132L319.58 1134.24L320.22 1135.37L321.5 1136.49L322.77 1137.05L324.69 1137.61L327.88 1137.61L329.79 1137.05L331.07 1136.49L332.34 1135.37L332.98 1134.24L332.98 1132L332.34 1130.87L331.07 1129.75L329.79 1129.19L327.88 1129.19M327.88 1132L327.88 1129.19M332.98 1123.7L319.58 1123.7L332.98 1115.66L319.58 1115.66M319.58 1109.53L332.98 1109.53M319.58 1109.53L319.58 1105.69L320.22 1104.04L321.5 1102.94L322.77 1102.39L324.69 1101.85L327.88 1101.85L329.79 1102.39L331.07 1102.94L332.34 1104.04L332.98 1105.69L332.98 1109.53M349.52 1129.19L348.25 1129.75L346.97 1130.87L346.33 1132L346.33 1134.24L346.97 1135.37L348.25 1136.49L349.52 1137.05L351.44 1137.61L354.63 1137.61L356.54 1137.05L357.82 1136.49L359.09 1135.37L359.73 1134.24L359.73 1132L359.09 1130.87L357.82 1129.75L356.54 1129.19L354.63 1129.19M354.63 1132L354.63 1129.19M359.73 1123.7L346.33 1123.7L359.73 1115.66L346.33 1115.66M346.33 1109.53L359.73 1109.53M346.33 1109.53L346.33 1105.69L346.97 1104.04L348.25 1102.94L349.52 1102.39L351.44 1101.85L354.63 1101.85L356.54 1102.39L357.82 1102.94L359.09 1104.04L359.73 1105.69L359.73 1109.53M376.27 1129.19L375 1129.75L373.72 1130.87L373.08 1132L373.08 1134.24L373.72 1135.37L375 1136.49L376.27 1137.05L378.19 1137.61L381.38 1137.61L383.29 1137.05L384.57 1136.49L385.84 1135.37L386.48 1134.24L386.48 1132L385.84 1130.87L384.57 1129.75L383.29 1129.19L381.38 1129.19M381.38 1132L381.38 1129.19M386.48 1123.7L373.08 1123.7L386.48 1115.66L373.08 1115.66M373.08 1109.53L386.48 1109.53M373.08 1109.53L373.08 1105.69L373.72 1104.04L375 1102.94L376.27 1102.39L378.19 1101.85L381.38 1101.85L383.29 1102.39L384.57 1102.94L385.84 1104.04L386.48 1105.69L386.48 1109.53M403.02 1129.19L401.75 1129.75L400.47 1130.87L399.83 1132L399.83 1134.24L400.47 1135.37L401.75 1136.49L403.02 1137.05L404.94 1137.61L408.13 1137.61L410.04 1137.05L411.32 1136.49L412.59 1135.37L413.23 1134.24L413.23 1132L412.59 1130.87L411.32 1129.75L410.04 1129.19L408.13 1129.19M408.13 1132L408.13 1129.19M413.23 1123.7L399.83 1123.7L413.23 1115.66L399.83 1115.66M399.83 1109.53L413.23 1109.53M399.83 1109.53L399.83 1105.69L400.47 1104.04L401.75 1102.94L403.02 1102.39L404.94 1101.85L408.13 1101.85L410.04 1102.39L411.32 1102.94L412.59 1104.04L413.23 1105.69L413.23 1109.53M429.77 1129.19L428.5 1129.75L427.22 1130.87L426.58 1132L426.58 1134.24L427.22 1135.37L428.5 1136.49L429.77 1137.05L431.69 1137.61L434.88 1137.61L436.79 1137.05L438.07 1136.49L439.34 1135.37L439.98 1134.24L439.98 1132L439.34 1130.87L438.07 1129.75L436.79 1129.19L434.88 1129.19M434.88 1132L434.88 1129.19M439.98 1123.7L426.58 1123.7L439.98 1115.66L426.58 1115.66M426.58 1109.53L439.98 1109.53M426.58 1109.53L426.58 1105.69L427.22 1104.04L428.5 1102.94L429.77 1102.39L431.69 1101.85L434.88 1101.85L436.79 1102.39L438.07 1102.94L439.34 1104.04L439.98 1105.69L439.98 1109.53M456.52 1129.19L455.25 1129.75L453.97 1130.87L453.33 1132L453.33 1134.24L453.97 1135.37L455.25 1136.49L456.52 1137.05L458.44 1137.61L461.63 1137.61L463.54 1137.05L464.82 1136.49L466.09 1135.37L466.73 1134.24L466.73 1132L466.09 1130.87L464.82 1129.75L463.54 1129.19L461.63 1129.19M461.63 1132L461.63 1129.19M466.73 1123.7L453.33 1123.7L466.73 1115.66L453.33 1115.66M453.33 1109.53L466.73 1109.53M453.33 1109.53L453.33 1105.69L453.97 1104.04L455.25 1102.94L456.52 1102.39L458.44 1101.85L461.63 1101.85L463.54 1102.39L464.82 1102.94L466.09 1104.04L466.73 1105.69L466.73 1109.53M483.27 1129.19L482 1129.75L480.72 1130.87L480.08 1132L480.08 1134.24L480.72 1135.37L482 1136.49L483.27 1137.05L485.19 1137.61L488.38 1137.61L490.29 1137.05L491.57 1136.49L492.84 1135.37L493.48 1134.24L493.48 1132L492.84 1130.87L491.57 1129.75L490.29 1129.19L488.38 1129.19M488.38 1132L488.38 1129.19M493.48 1123.7L480.08 1123.7L493.48 1115.66L480.08 1115.66M480.08 1109.53L493.48 1109.53M480.08 1109.53L480.08 1105.69L480.72 1104.04L482 1102.94L483.27 1102.39L485.19 1101.85L488.38 1101.85L490.29 1102.39L491.57 1102.94L492.84 1104.04L493.48 1105.69L493.48 1109.53M546.98 1138.82L533.58 1134.36L546.98 1129.89M542.52 1137.29L542.52 1131.42M536.77 1117.7L535.5 1118.26L534.22 1119.39L533.58 1120.51L533.58 1122.76L534.22 1123.88L535.5 1125L536.77 1125.56L538.69 1126.13L541.88 1126.13L543.79 1125.56L545.07 1125L546.34 1123.88L546.98 1122.76L546.98 1120.51L546.34 1119.39L545.07 1118.26L543.79 1117.7L541.88 1117.7M541.88 1120.51L541.88 1117.7M546.98 1112.22L533.58 1112.22L546.98 1104.18L533.58 1104.18M533.58 1098.04L546.98 1098.04M533.58 1098.04L533.58 1094.2L534.22 1092.56L535.5 1091.46L536.77 1090.91L538.69 1090.36L541.88 1090.36L543.79 1090.91L545.07 1091.46L546.34 1092.56L546.98 1094.2L546.98 1098.04M569.45 94L569.45 104.53L569.85 106L570.77 107.02L572 107.4L574.04 107.4L575.27 107.02L576.18 106L576.59 104.53L576.59 94M582.72 96.94L584.5 95.91L586.42 94L586.42 107.4M582.34 107.4L589.99 107.4M569.45 133.9L569.45 120.5L576.59 133.9L576.59 120.5M583.48 120.5L583.48 131.03L583.89 132.5L584.81 133.52L586.04 133.9L588.08 133.9L589.3 133.52L590.22 132.5L590.63 131.03L590.63 120.5M604.99 123.69L604.43 122.41L603.3 121.14L602.18 120.5L599.93 120.5L598.81 121.14L597.69 122.41L597.13 123.69L596.56 125.6L596.56 128.8L597.13 130.71L597.69 131.99L598.81 133.26L599.93 133.9L602.18 133.9L603.3 133.26L604.43 131.99L604.99 130.71M610.52 120.5L610.52 133.9M610.52 133.9L616.87 133.9M621.04 120.5L621.04 133.9M621.04 120.5L628.5 120.5M621.04 126.88L626.49 126.88M621.04 133.9L628.5 133.9M636.54 120.5L635.18 120.95L633.94 122.03L633.01 123.56L632.52 125.29L632.52 129.11L633.01 130.84L633.94 132.37L635.18 133.45L636.54 133.9L638.4 133.9L639.76 133.45L640.99 132.37L641.92 130.84L642.42 129.11L642.42 125.29L641.92 123.56L640.99 122.03L639.76 120.95L638.4 120.5L636.54 120.5M653.8 120.5L651.63 120.5L649.85 121.14L648.44 122.41L647.61 124.14L647.17 126.56L647.17 131.09L647.8 132.75L649.34 133.9L652.27 133.9L653.87 132.88L654.63 131.22L654.63 128.54L653.99 127.01L652.4 125.92L649.59 125.92L647.93 126.88L647.17 128.54M662.99 120.5L659.29 129.82L668.1 129.82M665.54 125.92L665.54 133.9M672.88 128.16L683.73 128.16M689.28 120.5L689.28 133.9M689.28 120.5L696.75 120.5M689.28 126.88L694.74 126.88M703.83 120.5L700.13 129.82L708.93 129.82M706.38 125.92L706.38 133.9M713.53 123.44L715.31 122.41L717.23 120.5L717.23 133.9M713.14 133.9L720.8 133.9M726.29 123.44L728.08 122.41L729.99 120.5L729.99 133.9M725.91 133.9L733.56 133.9M739.21 133.9L739.21 120.5L744.38 120.5L746.1 121.14L746.68 121.78L747.25 123.05L747.25 124.33L746.68 125.6L746.1 126.24L744.38 126.88L739.21 126.88M743.23 126.88L747.25 133.9M752.48 120.5L752.48 133.9M752.48 120.5L759.95 120.5M752.48 126.88L757.94 126.88M752.48 133.9L759.95 133.9M1246.71 533.54L1246.15 532.26L1245.03 530.99L1243.9 530.35L1241.66 530.35L1240.53 530.99L1239.41 532.26L1238.85 533.54L1238.29 535.45L1238.29 538.65L1238.85 540.56L1239.41 541.84L1240.53 543.11L1241.66 543.75L1243.9 543.75L1245.03 543.11L1246.15 541.84L1246.71 540.56M1259.82 532.26L1258.61 530.99L1256.79 530.35L1254.37 530.35L1252.55 530.99L1251.34 532.26L1251.34 533.54L1251.94 534.82L1252.55 535.45L1253.76 536.09L1257.4 537.37L1258.61 538.01L1259.22 538.65L1259.82 539.92L1259.82 541.84L1258.61 543.11L1256.79 543.75L1254.37 543.75L1252.55 543.11L1251.34 541.84M1237.55 526.85L1261.16 526.85M1246.71 560.22L1246.15 558.94L1245.03 557.67L1243.9 557.03L1241.66 557.03L1240.53 557.67L1239.41 558.94L1238.85 560.22L1238.29 562.13L1238.29 565.33L1238.85 567.24L1239.41 568.52L1240.53 569.79L1241.66 570.43L1243.9 570.43L1245.03 569.79L1246.15 568.52L1246.71 567.24M1252.24 557.03L1252.24 570.43M1252.24 570.43L1258.6 570.43M1263.14 557.03L1263.14 570.43M1271.18 557.03L1263.14 565.96M1266.01 562.77L1271.18 570.43M1238.93 583.71L1238.93 597.11M1238.93 583.71L1242.77 583.71L1244.42 584.35L1245.52 585.62L1246.07 586.9L1246.62 588.81L1246.62 592.01L1246.07 593.92L1245.52 595.2L1244.42 596.47L1242.77 597.11L1238.93 597.11M1252.23 597.11L1252.23 583.71M1262.03 581.16L1260.88 582.43L1259.73 584.35L1258.58 586.9L1258.01 590.09L1258.01 592.64L1258.58 595.83L1259.73 598.39L1260.88 600.3L1262.03 601.58M1267.23 597.11L1267.23 583.71M1276.51 583.71L1275.39 584.16L1274.37 585.24L1273.6 586.77L1273.19 588.5L1273.19 592.32L1273.6 594.05L1274.37 595.58L1275.39 596.66L1276.51 597.11L1278.04 597.11L1279.16 596.66L1280.19 595.58L1280.95 594.05L1281.36 592.32L1281.36 588.5L1280.95 586.77L1280.19 585.24L1279.16 584.16L1278.04 583.71L1276.51 583.71M1290.68 583.71L1289.4 584.09L1288.25 585.24L1287.36 586.9L1286.91 588.81L1286.91 592.01L1287.36 593.92L1288.25 595.58L1289.4 596.73L1290.68 597.11L1291.95 596.73L1293.1 595.58L1293.99 593.92L1294.44 592.01L1294.44 588.81L1293.99 586.9L1293.1 585.24L1291.95 584.09L1290.68 583.71M1299.23 581.16L1300.38 582.43L1301.52 584.35L1302.67 586.9L1303.25 590.09L1303.25 592.64L1302.67 595.83L1301.52 598.39L1300.38 600.3L1299.23 601.58M1238.93 610.39L1238.93 623.79M1238.93 610.39L1242.77 610.39L1244.42 611.03L1245.52 612.3L1246.07 613.58L1246.62 615.49L1246.62 618.69L1246.07 620.6L1245.52 621.88L1244.42 623.15L1242.77 623.79L1238.93 623.79M1255.45 610.39L1254.33 610.84L1253.31 611.92L1252.54 613.45L1252.14 615.18L1252.14 619L1252.54 620.73L1253.31 622.26L1254.33 623.34L1255.45 623.79L1256.98 623.79L1258.11 623.34L1259.13 622.26L1259.89 620.73L1260.3 619L1260.3 615.18L1259.89 613.45L1259.13 611.92L1258.11 610.84L1256.98 610.39L1255.45 610.39M1270 607.84L1268.85 609.11L1267.7 611.03L1266.56 613.58L1265.98 616.77L1265.98 619.32L1266.56 622.51L1267.7 625.07L1268.85 626.98L1270 628.26M1275.2 623.79L1275.2 610.39M1284.49 610.39L1283.36 610.84L1282.34 611.92L1281.58 613.45L1281.17 615.18L1281.17 619L1281.58 620.73L1282.34 622.26L1283.36 623.34L1284.49 623.79L1286.02 623.79L1287.14 623.34L1288.16 622.26L1288.93 620.73L1289.34 619L1289.34 615.18L1288.93 613.45L1288.16 611.92L1287.14 610.84L1286.02 610.39L1284.49 610.39M1294.95 613.33L1296.74 612.3L1298.65 610.39L1298.65 623.79M1294.57 623.79L1302.23 623.79M1307.2 607.84L1308.35 609.11L1309.5 611.03L1310.65 613.58L1311.22 616.77L1311.22 619.32L1310.65 622.51L1309.5 625.07L1308.35 626.98L1307.2 628.26M1238.83 650.47L1238.83 637.07M1248.12 637.07L1246.99 637.52L1245.97 638.6L1245.21 640.13L1244.8 641.86L1244.8 645.68L1245.21 647.41L1245.97 648.94L1246.99 650.02L1248.12 650.47L1249.65 650.47L1250.77 650.02L1251.79 648.94L1252.56 647.41L1252.96 645.68L1252.96 641.86L1252.56 640.13L1251.79 638.6L1250.77 637.52L1249.65 637.07L1248.12 637.07M1258.32 638.6L1259.22 637.71L1260.75 637.07L1263.56 637.07L1264.96 637.58L1265.85 638.6L1266.24 639.88L1265.98 641.28L1265.09 642.81L1257.81 650.47L1266.49 650.47M1238.83 677.15L1238.83 663.75M1248.12 663.75L1246.99 664.2L1245.97 665.28L1245.21 666.81L1244.8 668.54L1244.8 672.36L1245.21 674.09L1245.97 675.62L1246.99 676.7L1248.12 677.15L1249.65 677.15L1250.77 676.7L1251.79 675.62L1252.56 674.09L1252.96 672.36L1252.96 668.54L1252.56 666.81L1251.79 665.28L1250.77 664.2L1249.65 663.75L1248.12 663.75M1257.94 663.75L1265.98 663.75L1261.58 668.85L1263.3 668.85L1264.83 669.49L1265.6 670.26L1266.24 671.73L1266.24 674.09L1265.6 675.62L1264.83 676.38L1263.3 677.15L1260.75 677.15L1259.22 676.51L1258.45 675.87L1257.81 674.73M1303.48 553.14L1316.88 548.64L1303.48 544.15M1306.67 531.99L1305.4 532.55L1304.12 533.67L1303.48 534.8L1303.48 537.04L1304.12 538.17L1305.4 539.29L1306.67 539.85L1308.59 540.41L1311.78 540.41L1313.69 539.85L1314.97 539.29L1316.25 538.17L1316.88 537.04L1316.88 534.8L1316.25 533.67L1314.97 532.55L1313.69 531.99M1306.67 518.59L1305.4 519.15L1304.12 520.27L1303.48 521.4L1303.48 523.64L1304.12 524.77L1305.4 525.89L1306.67 526.45L1308.59 527.01L1311.78 527.01L1313.69 526.45L1314.97 525.89L1316.25 524.77L1316.88 523.64L1316.88 521.4L1316.25 520.27L1314.97 519.15L1313.69 518.59M1306.67 709.24L1305.4 709.8L1304.12 710.92L1303.48 712.05L1303.48 714.29L1304.12 715.42L1305.4 716.54L1306.67 717.1L1308.59 717.66L1311.78 717.66L1313.69 717.1L1314.97 716.54L1316.25 715.42L1316.88 714.29L1316.88 712.05L1316.25 710.92L1314.97 709.8L1313.69 709.24L1311.78 709.24M1311.78 712.05L1311.78 709.24M1316.88 703.75L1303.48 703.75L1316.88 695.71L1303.48 695.71M1303.48 689.58L1316.88 689.58M1303.48 689.58L1303.48 685.74L1304.12 684.09L1305.4 682.99L1306.67 682.44L1308.59 681.9L1311.78 681.9L1313.69 682.44L1314.97 682.99L1316.25 684.09L1316.88 685.74L1316.88 689.58M1413.5 597.5L1413.5 607.07L1414.07 608.99L1415.22 610.26L1416.94 610.9L1418.09 610.9L1419.82 610.26L1420.96 608.99L1421.54 607.07L1421.54 597.5M1426.96 599.03L1427.86 598.14L1429.39 597.5L1432.2 597.5L1433.6 598.01L1434.49 599.03L1434.88 600.31L1434.62 601.71L1433.73 603.24L1426.45 610.9L1435.13 610.9M1412.41 624.2L1415.29 637.6L1418.16 627.39L1421.03 637.6L1423.9 624.2M1428.24 625.73L1429.13 624.84L1430.66 624.2L1433.47 624.2L1434.88 624.71L1435.77 625.73L1436.15 627.01L1435.9 628.41L1435 629.94L1427.73 637.6L1436.41 637.6M1448.15 624.2L1441.96 624.2L1441.38 630.07L1442.66 629.3L1444.32 628.92L1445.98 628.92L1447.38 629.56L1448.28 630.58L1448.72 632.11L1448.72 634.41L1448.28 635.88L1447.38 636.9L1445.98 637.6L1443.68 637.6L1442.15 636.96L1441.26 635.94M1457.59 624.2L1456.47 624.65L1455.45 625.73L1454.68 627.26L1454.27 628.99L1454.27 632.81L1454.68 634.54L1455.45 636.07L1456.47 637.15L1457.59 637.6L1459.12 637.6L1460.25 637.15L1461.27 636.07L1462.03 634.54L1462.44 632.81L1462.44 628.99L1462.03 627.26L1461.27 625.73L1460.25 624.65L1459.12 624.2L1457.59 624.2M1458.87 635.05L1461.93 638.88M1467.42 624.2L1475.46 624.2L1471.06 629.3L1472.78 629.3L1474.31 629.94L1475.08 630.71L1475.71 632.18L1475.71 634.54L1475.08 636.07L1474.31 636.83L1472.78 637.6L1470.23 637.6L1468.69 636.96L1467.93 636.32L1467.29 635.18M1480.56 625.73L1481.46 624.84L1482.99 624.2L1485.8 624.2L1487.2 624.71L1488.09 625.73L1488.48 627.01L1488.22 628.41L1487.33 629.94L1480.05 637.6L1488.73 637.6M1498.3 624.2L1498.3 634.41L1497.73 636.32L1497.15 636.96L1496 637.6L1494.86 637.6L1493.71 636.96L1493.13 636.32L1492.56 634.41L1492.56 633.13M1502.36 624.2L1506.85 637.6L1511.34 624.2M1523.22 626.11L1522.01 624.84L1520.19 624.2L1517.76 624.2L1515.95 624.84L1514.73 626.11L1514.73 627.39L1515.34 628.67L1515.95 629.3L1517.16 629.94L1520.79 631.22L1522.01 631.86L1522.61 632.5L1523.22 633.77L1523.22 635.69L1522.01 636.96L1520.19 637.6L1517.76 637.6L1515.95 636.96L1514.73 635.69M1535.98 626.11L1534.77 624.84L1532.95 624.2L1530.53 624.2L1528.71 624.84L1527.49 626.11L1527.49 627.39L1528.1 628.67L1528.71 629.3L1529.92 629.94L1533.56 631.22L1534.77 631.86L1535.38 632.5L1535.98 633.77L1535.98 635.69L1534.77 636.96L1532.95 637.6L1530.53 637.6L1528.71 636.96L1527.49 635.69" stroke="#006464" stroke-width="1.55" stroke-linecap="round" stroke-linejoin="round" fill="none"/>
<path d="M129.11 230.46L138.04 230.46L132.3 243.86M123.49 260.17L125.28 259.15L127.2 257.24L127.2 270.64M123.11 270.64L130.77 270.64M139.32 257.24L135.62 266.55L144.42 266.55M141.87 262.66L141.87 270.64M123.24 526.55L124.13 525.66L125.66 525.02L128.47 525.02L129.88 525.53L130.77 526.55L131.15 527.83L130.9 529.23L130 530.76L122.73 538.42L131.41 538.42M137.02 538.42L139.19 538.42L140.98 537.78L142.38 536.5L143.21 534.78L143.66 532.36L143.66 527.83L143.02 526.17L141.49 525.02L138.55 525.02L136.96 526.04L136.19 527.7L136.19 530.38L136.83 531.91L138.43 532.99L141.23 532.99L142.89 532.04L143.66 530.38M122.86 551.8L130.9 551.8L126.49 556.9L128.22 556.9L129.75 557.54L130.51 558.3L131.15 559.77L131.15 562.13L130.51 563.66L129.75 564.43L128.22 565.2L125.66 565.2L124.13 564.56L123.37 563.92L122.73 562.77M136.26 554.73L138.04 553.71L139.96 551.8L139.96 565.2M135.87 565.2L143.53 565.2M132.94 605.35L129.24 614.67L138.04 614.67M135.49 610.78L135.49 618.75M122.86 658.91L130.9 658.91L126.49 664.01L128.22 664.01L129.75 664.65L130.51 665.42L131.15 666.88L131.15 669.25L130.51 670.78L129.75 671.54L128.22 672.31L125.66 672.31L124.13 671.67L123.37 671.03L122.73 669.88M138.81 658.91L137.41 659.55L136.7 660.82L136.7 662.74L137.41 664.01L138.81 664.78L141.11 664.78L142.51 664.01L143.21 662.74L143.21 660.82L142.51 659.55L141.11 658.91L138.81 658.91M138.81 664.78L137.15 665.67L136.26 667.08L136.26 669.88L137.02 671.29L138.55 672.31L141.36 672.31L142.89 671.29L143.66 669.88L143.66 667.08L142.77 665.67L141.11 664.78M122.86 685.69L130.9 685.69L126.49 690.79L128.22 690.79L129.75 691.43L130.51 692.19L131.15 693.66L131.15 696.02L130.51 697.55L129.75 698.32L128.22 699.09L125.66 699.09L124.13 698.45L123.37 697.81L122.73 696.66M142.89 685.69L140.72 685.69L138.94 686.32L137.53 687.6L136.7 689.32L136.26 691.75L136.26 696.28L136.89 697.94L138.43 699.09L141.36 699.09L142.96 698.07L143.72 696.41L143.72 693.73L143.08 692.19L141.49 691.11L138.68 691.11L137.02 692.07L136.26 693.73M122.86 712.46L130.9 712.46L126.49 717.57L128.22 717.57L129.75 718.21L130.51 718.97L131.15 720.44L131.15 722.8L130.51 724.33L129.75 725.1L128.22 725.86L125.66 725.86L124.13 725.23L123.37 724.59L122.73 723.44M143.15 712.46L136.96 712.46L136.38 718.33L137.66 717.57L139.32 717.19L140.98 717.19L142.38 717.82L143.28 718.84L143.72 720.38L143.72 722.67L143.28 724.14L142.38 725.16L140.98 725.86L138.68 725.86L137.15 725.23L136.26 724.2M122.86 739.24L130.9 739.24L126.49 744.35L128.22 744.35L129.75 744.98L130.51 745.75L131.15 747.22L131.15 749.58L130.51 751.11L129.75 751.88L128.22 752.64L125.66 752.64L124.13 752L123.37 751.37L122.73 750.22M135.49 739.24L144.42 739.24L138.68 752.64M122.73 766.02L131.66 766.02L125.92 779.42M136 767.55L136.89 766.66L138.43 766.02L141.23 766.02L142.64 766.53L143.53 767.55L143.91 768.83L143.66 770.23L142.77 771.76L135.49 779.42L144.17 779.42M126.56 792.8L122.86 802.11L131.66 802.11M129.11 798.22L129.11 806.2M139.32 792.8L135.62 802.11L144.42 802.11M141.87 798.22L141.87 806.2M126.56 819.58L122.86 828.89L131.66 828.89M129.11 825L129.11 832.98M136 821.11L136.89 820.21L138.43 819.58L141.23 819.58L142.64 820.09L143.53 821.11L143.91 822.38L143.66 823.79L142.77 825.32L135.49 832.98L144.17 832.98M130.39 846.35L124.2 846.35L123.62 852.22L124.9 851.46L126.56 851.08L128.22 851.08L129.62 851.71L130.51 852.73L130.96 854.27L130.96 856.56L130.51 858.03L129.62 859.05L128.22 859.75L125.92 859.75L124.39 859.12L123.49 858.09M135.49 846.35L144.42 846.35L138.68 859.75M126.56 873.13L122.86 882.45L131.66 882.45M129.11 878.56L129.11 886.53M139.96 873.13L138.68 873.51L137.53 874.66L136.64 876.32L136.19 878.24L136.19 881.43L136.64 883.34L137.53 885L138.68 886.15L139.96 886.53L141.23 886.15L142.38 885L143.28 883.34L143.72 881.43L143.72 878.24L143.28 876.32L142.38 874.66L141.23 873.51L139.96 873.13M122.86 899.91L130.9 899.91L126.49 905.01L128.22 905.01L129.75 905.65L130.51 906.42L131.15 907.89L131.15 910.25L130.51 911.78L129.75 912.54L128.22 913.31L125.66 913.31L124.13 912.67L123.37 912.03L122.73 910.89M137.02 913.31L139.19 913.31L140.98 912.67L142.38 911.4L143.21 909.67L143.66 907.25L143.66 902.72L143.02 901.06L141.49 899.91L138.55 899.91L136.96 900.93L136.19 902.59L136.19 905.27L136.83 906.8L138.43 907.89L141.23 907.89L142.89 906.93L143.66 905.27M129.88 929.62L131.66 928.6L133.58 926.69L133.58 940.09M129.49 940.09L137.15 940.09M129.62 955L130.51 954.1L132.05 953.47L134.85 953.47L136.26 953.98L137.15 955L137.53 956.27L137.28 957.68L136.38 959.21L129.11 966.87L137.79 966.87M129.24 980.24L137.28 980.24L132.87 985.35L134.6 985.35L136.13 985.99L136.89 986.75L137.53 988.22L137.53 990.58L136.89 992.11L136.13 992.88L134.6 993.64L132.05 993.64L130.51 993.01L129.75 992.37L129.11 991.22M123.24 1008.55L124.13 1007.66L125.66 1007.02L128.47 1007.02L129.88 1007.53L130.77 1008.55L131.15 1009.83L130.9 1011.23L130 1012.76L122.73 1020.42L131.41 1020.42M135.62 1007.02L143.66 1007.02L139.26 1012.13L140.98 1012.13L142.51 1012.76L143.28 1013.53L143.91 1015L143.91 1017.36L143.28 1018.89L142.51 1019.66L140.98 1020.42L138.43 1020.42L136.89 1019.78L136.13 1019.15L135.49 1018M123.24 1035.33L124.13 1034.44L125.66 1033.8L128.47 1033.8L129.88 1034.31L130.77 1035.33L131.15 1036.61L130.9 1038.01L130 1039.54L122.73 1047.2L131.41 1047.2M143.15 1033.8L136.96 1033.8L136.38 1039.67L137.66 1038.9L139.32 1038.52L140.98 1038.52L142.38 1039.16L143.28 1040.18L143.72 1041.71L143.72 1044.01L143.28 1045.48L142.38 1046.5L140.98 1047.2L138.68 1047.2L137.15 1046.56L136.26 1045.54M123.24 1062.11L124.13 1061.22L125.66 1060.58L128.47 1060.58L129.88 1061.09L130.77 1062.11L131.15 1063.39L130.9 1064.79L130 1066.32L122.73 1073.98L131.41 1073.98M135.49 1060.58L144.42 1060.58L138.68 1073.98M672.19 231.99L673.08 231.1L674.61 230.46L677.42 230.46L678.82 230.97L679.72 231.99L680.1 233.27L679.85 234.67L678.95 236.2L671.68 243.86L680.36 243.86M687.76 230.46L686.35 231.1L685.65 232.37L685.65 234.29L686.35 235.56L687.76 236.33L690.06 236.33L691.46 235.56L692.16 234.29L692.16 232.37L691.46 231.1L690.06 230.46L687.76 230.46M687.76 236.33L686.1 237.22L685.21 238.63L685.21 241.44L685.97 242.84L687.5 243.86L690.31 243.86L691.84 242.84L692.61 241.44L692.61 238.63L691.71 237.22L690.06 236.33M671.81 257.24L679.85 257.24L675.44 262.34L677.17 262.34L678.7 262.98L679.46 263.75L680.1 265.21L680.1 267.58L679.46 269.11L678.7 269.87L677.17 270.64L674.61 270.64L673.08 270L672.32 269.36L671.68 268.21M688.91 257.24L687.63 257.62L686.48 258.77L685.59 260.43L685.14 262.34L685.14 265.53L685.59 267.45L686.48 269.11L687.63 270.26L688.91 270.64L690.18 270.26L691.33 269.11L692.22 267.45L692.67 265.53L692.67 262.34L692.22 260.43L691.33 258.77L690.18 257.62L688.91 257.24M671.68 284.02L680.61 284.02L674.87 297.42M684.57 284.02L692.61 284.02L688.2 289.12L689.93 289.12L691.46 289.76L692.22 290.52L692.86 291.99L692.86 294.35L692.22 295.88L691.46 296.65L689.93 297.42L687.38 297.42L685.84 296.78L685.08 296.14L684.44 294.99M671.68 310.79L680.61 310.79L674.87 324.19M692.1 310.79L685.91 310.79L685.33 316.66L686.61 315.9L688.27 315.52L689.93 315.52L691.33 316.15L692.22 317.17L692.67 318.71L692.67 321L692.22 322.47L691.33 323.49L689.93 324.19L687.63 324.19L686.1 323.56L685.21 322.53M671.81 337.57L679.85 337.57L675.44 342.68L677.17 342.68L678.7 343.31L679.46 344.08L680.1 345.55L680.1 347.91L679.46 349.44L678.7 350.21L677.17 350.97L674.61 350.97L673.08 350.33L672.32 349.7L671.68 348.55M684.95 339.1L685.84 338.21L687.38 337.57L690.18 337.57L691.59 338.08L692.48 339.1L692.86 340.38L692.61 341.78L691.71 343.31L684.44 350.97L693.12 350.97M675.51 364.35L671.81 373.67L680.61 373.67M678.06 369.77L678.06 377.75M685.97 377.75L688.14 377.75L689.93 377.11L691.33 375.84L692.16 374.11L692.61 371.69L692.61 367.16L691.97 365.5L690.44 364.35L687.5 364.35L685.91 365.37L685.14 367.03L685.14 369.71L685.78 371.24L687.38 372.33L690.18 372.33L691.84 371.37L692.61 369.71M679.34 391.13L673.15 391.13L672.57 397L673.85 396.23L675.51 395.85L677.17 395.85L678.57 396.49L679.46 397.51L679.91 399.04L679.91 401.34L679.46 402.81L678.57 403.83L677.17 404.53L674.87 404.53L673.34 403.89L672.44 402.87M685.21 394.06L686.99 393.04L688.91 391.13L688.91 404.53M684.82 404.53L692.48 404.53M679.34 417.91L673.15 417.91L672.57 423.78L673.85 423.01L675.51 422.63L677.17 422.63L678.57 423.27L679.46 424.29L679.91 425.82L679.91 428.12L679.46 429.58L678.57 430.6L677.17 431.31L674.87 431.31L673.34 430.67L672.44 429.65M684.57 417.91L692.61 417.91L688.2 423.01L689.93 423.01L691.46 423.65L692.22 424.41L692.86 425.88L692.86 428.24L692.22 429.77L691.46 430.54L689.93 431.31L687.38 431.31L685.84 430.67L685.08 430.03L684.44 428.88M679.08 444.68L676.91 444.68L675.12 445.32L673.72 446.6L672.89 448.32L672.44 450.75L672.44 455.28L673.08 456.94L674.61 458.08L677.55 458.08L679.14 457.06L679.91 455.4L679.91 452.72L679.27 451.19L677.68 450.11L674.87 450.11L673.21 451.06L672.44 452.72M685.21 447.62L686.99 446.6L688.91 444.68L688.91 458.08M684.82 458.08L692.48 458.08M679.34 471.46L673.15 471.46L672.57 477.33L673.85 476.57L675.51 476.18L677.17 476.18L678.57 476.82L679.46 477.84L679.91 479.37L679.91 481.67L679.46 483.14L678.57 484.16L677.17 484.86L674.87 484.86L673.34 484.22L672.44 483.2M685.97 484.86L688.14 484.86L689.93 484.22L691.33 482.95L692.16 481.22L692.61 478.8L692.61 474.27L691.97 472.61L690.44 471.46L687.5 471.46L685.91 472.48L685.14 474.14L685.14 476.82L685.78 478.35L687.38 479.44L690.18 479.44L691.84 478.48L692.61 476.82M671.68 498.24L680.61 498.24L674.87 511.64M685.21 501.18L686.99 500.15L688.91 498.24L688.91 511.64M684.82 511.64L692.48 511.64M679.34 525.02L673.15 525.02L672.57 530.89L673.85 530.12L675.51 529.74L677.17 529.74L678.57 530.38L679.46 531.4L679.91 532.93L679.91 535.23L679.46 536.7L678.57 537.72L677.17 538.42L674.87 538.42L673.34 537.78L672.44 536.76M684.95 526.55L685.84 525.66L687.38 525.02L690.18 525.02L691.59 525.53L692.48 526.55L692.86 527.83L692.61 529.23L691.71 530.76L684.44 538.42L693.12 538.42M679.34 551.8L673.15 551.8L672.57 557.67L673.85 556.9L675.51 556.52L677.17 556.52L678.57 557.16L679.46 558.18L679.91 559.71L679.91 562.01L679.46 563.47L678.57 564.49L677.17 565.2L674.87 565.2L673.34 564.56L672.44 563.54M688.91 551.8L687.63 552.18L686.48 553.33L685.59 554.99L685.14 556.9L685.14 560.09L685.59 562.01L686.48 563.66L687.63 564.81L688.91 565.2L690.18 564.81L691.33 563.66L692.22 562.01L692.67 560.09L692.67 556.9L692.22 554.99L691.33 553.33L690.18 552.18L688.91 551.8M672.44 581.51L674.23 580.49L676.14 578.57L676.14 591.97M672.06 591.97L679.72 591.97M684.57 578.57L692.61 578.57L688.2 583.68L689.93 583.68L691.46 584.32L692.22 585.08L692.86 586.55L692.86 588.91L692.22 590.44L691.46 591.21L689.93 591.97L687.38 591.97L685.84 591.34L685.08 590.7L684.44 589.55M672.44 608.29L674.23 607.27L676.14 605.35L676.14 618.75M672.06 618.75L679.72 618.75M692.1 605.35L685.91 605.35L685.33 611.22L686.61 610.46L688.27 610.07L689.93 610.07L691.33 610.71L692.22 611.73L692.67 613.26L692.67 615.56L692.22 617.03L691.33 618.05L689.93 618.75L687.63 618.75L686.1 618.11L685.21 617.09M672.44 635.07L674.23 634.04L676.14 632.13L676.14 645.53M672.06 645.53L679.72 645.53M684.44 632.13L693.37 632.13L687.63 645.53M671.81 685.69L679.85 685.69L675.44 690.79L677.17 690.79L678.7 691.43L679.46 692.19L680.1 693.66L680.1 696.02L679.46 697.55L678.7 698.32L677.17 699.09L674.61 699.09L673.08 698.45L672.32 697.81L671.68 696.66M688.27 685.69L684.57 695L693.37 695M690.82 691.11L690.82 699.09M679.08 712.46L676.91 712.46L675.12 713.1L673.72 714.38L672.89 716.1L672.44 718.53L672.44 723.06L673.08 724.72L674.61 725.86L677.55 725.86L679.14 724.84L679.91 723.18L679.91 720.5L679.27 718.97L677.68 717.89L674.87 717.89L673.21 718.84L672.44 720.5M684.95 714L685.84 713.1L687.38 712.46L690.18 712.46L691.59 712.97L692.48 714L692.86 715.27L692.61 716.68L691.71 718.21L684.44 725.86L693.12 725.86M679.08 739.24L676.91 739.24L675.12 739.88L673.72 741.16L672.89 742.88L672.44 745.3L672.44 749.83L673.08 751.49L674.61 752.64L677.55 752.64L679.14 751.62L679.91 749.96L679.91 747.28L679.27 745.75L677.68 744.67L674.87 744.67L673.21 745.62L672.44 747.28M688.91 739.24L687.63 739.62L686.48 740.77L685.59 742.43L685.14 744.35L685.14 747.54L685.59 749.45L686.48 751.11L687.63 752.26L688.91 752.64L690.18 752.26L691.33 751.11L692.22 749.45L692.67 747.54L692.67 744.35L692.22 742.43L691.33 740.77L690.18 739.62L688.91 739.24M679.08 766.02L676.91 766.02L675.12 766.66L673.72 767.93L672.89 769.66L672.44 772.08L672.44 776.61L673.08 778.27L674.61 779.42L677.55 779.42L679.14 778.4L679.91 776.74L679.91 774.06L679.27 772.53L677.68 771.44L674.87 771.44L673.21 772.4L672.44 774.06M685.97 779.42L688.14 779.42L689.93 778.78L691.33 777.51L692.16 775.78L692.61 773.36L692.61 768.83L691.97 767.17L690.44 766.02L687.5 766.02L685.91 767.04L685.14 768.7L685.14 771.38L685.78 772.91L687.38 774L690.18 774L691.84 773.04L692.61 771.38M679.08 792.8L676.91 792.8L675.12 793.44L673.72 794.71L672.89 796.44L672.44 798.86L672.44 803.39L673.08 805.05L674.61 806.2L677.55 806.2L679.14 805.18L679.91 803.52L679.91 800.84L679.27 799.31L677.68 798.22L674.87 798.22L673.21 799.18L672.44 800.84M692.1 792.8L685.91 792.8L685.33 798.67L686.61 797.9L688.27 797.52L689.93 797.52L691.33 798.16L692.22 799.18L692.67 800.71L692.67 803.01L692.22 804.48L691.33 805.5L689.93 806.2L687.63 806.2L686.1 805.56L685.21 804.54M679.08 819.58L676.91 819.58L675.12 820.21L673.72 821.49L672.89 823.21L672.44 825.64L672.44 830.17L673.08 831.83L674.61 832.98L677.55 832.98L679.14 831.96L679.91 830.3L679.91 827.62L679.27 826.08L677.68 825L674.87 825L673.21 825.96L672.44 827.62M684.44 819.58L693.37 819.58L687.63 832.98M679.34 846.35L673.15 846.35L672.57 852.22L673.85 851.46L675.51 851.08L677.17 851.08L678.57 851.71L679.46 852.73L679.91 854.27L679.91 856.56L679.46 858.03L678.57 859.05L677.17 859.75L674.87 859.75L673.34 859.12L672.44 858.09M692.1 846.35L685.91 846.35L685.33 852.22L686.61 851.46L688.27 851.08L689.93 851.08L691.33 851.71L692.22 852.73L692.67 854.27L692.67 856.56L692.22 858.03L691.33 859.05L689.93 859.75L687.63 859.75L686.1 859.12L685.21 858.09M672.19 874.66L673.08 873.77L674.61 873.13L677.42 873.13L678.82 873.64L679.72 874.66L680.1 875.94L679.85 877.34L678.95 878.87L671.68 886.53L680.36 886.53M685.21 876.07L686.99 875.05L688.91 873.13L688.91 886.53M684.82 886.53L692.48 886.53M675.51 899.91L671.81 909.23L680.61 909.23M678.06 905.33L678.06 913.31M685.21 902.85L686.99 901.82L688.91 899.91L688.91 913.31M684.82 913.31L692.48 913.31M675.51 926.69L671.81 936L680.61 936M678.06 932.11L678.06 940.09M684.57 926.69L692.61 926.69L688.2 931.79L689.93 931.79L691.46 932.43L692.22 933.2L692.86 934.66L692.86 937.03L692.22 938.56L691.46 939.32L689.93 940.09L687.38 940.09L685.84 939.45L685.08 938.81L684.44 937.66M679.08 953.47L676.91 953.47L675.12 954.1L673.72 955.38L672.89 957.1L672.44 959.53L672.44 964.06L673.08 965.72L674.61 966.87L677.55 966.87L679.14 965.85L679.91 964.19L679.91 961.51L679.27 959.97L677.68 958.89L674.87 958.89L673.21 959.85L672.44 961.51M684.57 953.47L692.61 953.47L688.2 958.57L689.93 958.57L691.46 959.21L692.22 959.97L692.86 961.44L692.86 963.8L692.22 965.33L691.46 966.1L689.93 966.87L687.38 966.87L685.84 966.23L685.08 965.59L684.44 964.44M679.34 980.24L673.15 980.24L672.57 986.11L673.85 985.35L675.51 984.97L677.17 984.97L678.57 985.6L679.46 986.62L679.91 988.16L679.91 990.45L679.46 991.92L678.57 992.94L677.17 993.64L674.87 993.64L673.34 993.01L672.44 991.98M688.27 980.24L684.57 989.56L693.37 989.56M690.82 985.67L690.82 993.64M679.08 1007.02L676.91 1007.02L675.12 1007.66L673.72 1008.94L672.89 1010.66L672.44 1013.08L672.44 1017.61L673.08 1019.27L674.61 1020.42L677.55 1020.42L679.14 1019.4L679.91 1017.74L679.91 1015.06L679.27 1013.53L677.68 1012.45L674.87 1012.45L673.21 1013.4L672.44 1015.06M687.76 1007.02L686.35 1007.66L685.65 1008.94L685.65 1010.85L686.35 1012.13L687.76 1012.89L690.06 1012.89L691.46 1012.13L692.16 1010.85L692.16 1008.94L691.46 1007.66L690.06 1007.02L687.76 1007.02M687.76 1012.89L686.1 1013.79L685.21 1015.19L685.21 1018L685.97 1019.4L687.5 1020.42L690.31 1020.42L691.84 1019.4L692.61 1018L692.61 1015.19L691.71 1013.79L690.06 1012.89M679.08 1033.8L676.91 1033.8L675.12 1034.44L673.72 1035.71L672.89 1037.44L672.44 1039.86L672.44 1044.39L673.08 1046.05L674.61 1047.2L677.55 1047.2L679.14 1046.18L679.91 1044.52L679.91 1041.84L679.27 1040.31L677.68 1039.22L674.87 1039.22L673.21 1040.18L672.44 1041.84M691.84 1033.8L689.67 1033.8L687.89 1034.44L686.48 1035.71L685.65 1037.44L685.21 1039.86L685.21 1044.39L685.84 1046.05L687.38 1047.2L690.31 1047.2L691.91 1046.18L692.67 1044.52L692.67 1041.84L692.03 1040.31L690.44 1039.22L687.63 1039.22L685.97 1040.18L685.21 1041.84M679.08 1060.58L676.91 1060.58L675.12 1061.22L673.72 1062.49L672.89 1064.22L672.44 1066.64L672.44 1071.17L673.08 1072.83L674.61 1073.98L677.55 1073.98L679.14 1072.96L679.91 1071.3L679.91 1068.62L679.27 1067.09L677.68 1066L674.87 1066L673.21 1066.96L672.44 1068.62M688.27 1060.58L684.57 1069.89L693.37 1069.89M690.82 1066L690.82 1073.98M229.28 131.18L229.28 137.37L235.15 137.94L234.39 136.66L234 135L234 133.35L234.64 131.94L235.66 131.05L237.2 130.6L239.49 130.6L240.96 131.05L241.98 131.94L242.68 133.35L242.68 135.64L242.04 137.17L241.02 138.07M256.03 131.43L256.03 133.6L256.67 135.39L257.95 136.79L259.67 137.62L262.09 138.07L266.63 138.07L268.28 137.43L269.43 135.9L269.43 132.96L268.41 131.37L266.75 130.6L264.07 130.6L262.54 131.24L261.46 132.84L261.46 135.64L262.41 137.3L264.07 138.07M285.72 144.45L284.7 142.66L282.78 140.75L296.18 140.75M296.18 144.83L296.18 137.17M284.31 131.94L283.42 131.05L282.78 129.52L282.78 126.71L283.29 125.31L284.31 124.41L285.59 124.03L286.99 124.28L288.53 125.18L296.18 132.45L296.18 123.77M312.47 144.45L311.45 142.66L309.53 140.75L322.93 140.75M322.93 144.83L322.93 137.17M309.53 125.05L309.53 127.22L310.17 129.01L311.45 130.41L313.17 131.24L315.59 131.69L320.13 131.69L321.78 131.05L322.93 129.52L322.93 126.58L321.91 124.99L320.25 124.22L317.57 124.22L316.04 124.86L314.96 126.45L314.96 129.26L315.91 130.92L317.57 131.69M339.22 144.45L338.2 142.66L336.28 140.75L349.68 140.75M349.68 144.83L349.68 137.17M336.28 129.13L336.92 130.54L338.2 131.24L340.11 131.24L341.39 130.54L342.15 129.13L342.15 126.84L341.39 125.43L340.11 124.73L338.2 124.73L336.92 125.43L336.28 126.84L336.28 129.13M342.15 129.13L343.05 130.79L344.45 131.69L347.26 131.69L348.66 130.92L349.68 129.39L349.68 126.58L348.66 125.05L347.26 124.28L344.45 124.28L343.05 125.18L342.15 126.84M364.56 144.7L363.67 143.81L363.03 142.28L363.03 139.47L363.54 138.07L364.56 137.17L365.84 136.79L367.24 137.05L368.78 137.94L376.43 145.21L376.43 136.54M363.03 128.62L372.35 132.32L372.35 123.52M368.46 126.07L376.43 126.07M389.78 145.09L389.78 137.05L394.89 141.45L394.89 139.73L395.53 138.2L396.29 137.43L397.76 136.79L400.12 136.79L401.65 137.43L402.42 138.2L403.18 139.73L403.18 142.28L402.54 143.81L401.91 144.58L400.76 145.21M389.78 132.32L389.78 124.28L394.89 128.69L394.89 126.96L395.53 125.43L396.29 124.67L397.76 124.03L400.12 124.03L401.65 124.67L402.42 125.43L403.18 126.96L403.18 129.52L402.54 131.05L401.91 131.81L400.76 132.45M416.53 141.39L425.85 145.09L425.85 136.28M421.96 138.83L429.93 138.83M416.53 125.05L416.53 127.22L417.17 129.01L418.45 130.41L420.17 131.24L422.59 131.69L427.13 131.69L428.78 131.05L429.93 129.52L429.93 126.58L428.91 124.99L427.25 124.22L424.57 124.22L423.04 124.86L421.96 126.45L421.96 129.26L422.91 130.92L424.57 131.69M523.53 141.39L532.85 145.09L532.85 136.28M528.96 138.83L536.93 138.83M523.53 124.8L523.53 130.98L529.4 131.56L528.64 130.28L528.25 128.62L528.25 126.96L528.89 125.56L529.91 124.67L531.45 124.22L533.74 124.22L535.21 124.67L536.23 125.56L536.93 126.96L536.93 129.26L536.29 130.79L535.27 131.69M229.28 1166.73L229.92 1168.14L231.2 1168.84L233.11 1168.84L234.39 1168.14L235.15 1166.73L235.15 1164.43L234.39 1163.03L233.11 1162.33L231.2 1162.33L229.92 1163.03L229.28 1164.43L229.28 1166.73M235.15 1166.73L236.05 1168.39L237.45 1169.28L240.26 1169.28L241.66 1168.52L242.68 1166.99L242.68 1164.18L241.66 1162.65L240.26 1161.88L237.45 1161.88L236.05 1162.78L235.15 1164.43M258.97 1175.67L257.95 1173.88L256.03 1171.96L269.43 1171.96M269.43 1176.05L269.43 1168.39M269.43 1162.14L269.43 1159.97L268.79 1158.18L267.52 1156.78L265.8 1155.95L263.37 1155.5L258.84 1155.5L257.18 1156.14L256.03 1157.67L256.03 1160.61L257.05 1162.2L258.71 1162.97L261.39 1162.97L262.92 1162.33L264.01 1160.73L264.01 1157.93L263.05 1156.27L261.39 1155.5M284.31 1175.92L283.42 1175.03L282.78 1173.5L282.78 1170.69L283.29 1169.28L284.31 1168.39L285.59 1168.01L286.99 1168.26L288.53 1169.16L296.18 1176.43L296.18 1167.75M282.78 1159.2L283.17 1160.48L284.31 1161.63L285.97 1162.52L287.89 1162.97L291.08 1162.97L292.99 1162.52L294.65 1161.63L295.8 1160.48L296.18 1159.2L295.8 1157.93L294.65 1156.78L292.99 1155.88L291.08 1155.44L287.89 1155.44L285.97 1155.88L284.31 1156.78L283.17 1157.93L282.78 1159.2M311.06 1175.92L310.17 1175.03L309.53 1173.5L309.53 1170.69L310.04 1169.28L311.06 1168.39L312.34 1168.01L313.74 1168.26L315.28 1169.16L322.93 1176.43L322.93 1167.75M311.06 1163.16L310.17 1162.27L309.53 1160.73L309.53 1157.93L310.04 1156.52L311.06 1155.63L312.34 1155.25L313.74 1155.5L315.28 1156.39L322.93 1163.67L322.93 1154.99M336.28 1172.6L345.6 1176.3L345.6 1167.5M341.71 1170.05L349.68 1170.05M336.28 1163.67L336.28 1154.74L349.68 1160.48M363.03 1168.77L363.03 1174.96L368.9 1175.54L368.14 1174.26L367.75 1172.6L367.75 1170.94L368.39 1169.54L369.41 1168.65L370.95 1168.2L373.24 1168.2L374.71 1168.65L375.73 1169.54L376.43 1170.94L376.43 1173.24L375.79 1174.77L374.77 1175.67M363.03 1160.35L363.67 1161.75L364.95 1162.46L366.86 1162.46L368.14 1161.75L368.9 1160.35L368.9 1158.05L368.14 1156.65L366.86 1155.95L364.95 1155.95L363.67 1156.65L363.03 1158.05L363.03 1160.35M368.9 1160.35L369.8 1162.01L371.2 1162.9L374.01 1162.9L375.41 1162.14L376.43 1160.61L376.43 1157.8L375.41 1156.27L374.01 1155.5L371.2 1155.5L369.8 1156.39L368.9 1158.05M389.78 1176.43L389.78 1167.5L403.18 1173.24M389.78 1163.67L389.78 1154.74L403.18 1160.48M416.53 1176.43L416.53 1167.5L429.93 1173.24M416.53 1160.35L417.17 1161.75L418.45 1162.46L420.36 1162.46L421.64 1161.75L422.4 1160.35L422.4 1158.05L421.64 1156.65L420.36 1155.95L418.45 1155.95L417.17 1156.65L416.53 1158.05L416.53 1160.35M422.4 1160.35L423.3 1162.01L424.7 1162.9L427.51 1162.9L428.91 1162.14L429.93 1160.61L429.93 1157.8L428.91 1156.27L427.51 1155.5L424.7 1155.5L423.3 1156.39L422.4 1158.05M443.28 1176.43L443.28 1167.5L456.68 1173.24M456.68 1162.14L456.68 1159.97L456.04 1158.18L454.77 1156.78L453.05 1155.95L450.62 1155.5L446.09 1155.5L444.43 1156.14L443.28 1157.67L443.28 1160.61L444.3 1162.2L445.96 1162.97L448.64 1162.97L450.17 1162.33L451.26 1160.73L451.26 1157.93L450.3 1156.27L448.64 1155.5M470.03 1173.11L470.67 1174.52L471.95 1175.22L473.86 1175.22L475.14 1174.52L475.9 1173.11L475.9 1170.82L475.14 1169.41L473.86 1168.71L471.95 1168.71L470.67 1169.41L470.03 1170.82L470.03 1173.11M475.9 1173.11L476.8 1174.77L478.2 1175.67L481.01 1175.67L482.41 1174.9L483.43 1173.37L483.43 1170.56L482.41 1169.03L481.01 1168.26L478.2 1168.26L476.8 1169.16L475.9 1170.82M470.03 1159.2L470.42 1160.48L471.56 1161.63L473.22 1162.52L475.14 1162.97L478.33 1162.97L480.24 1162.52L481.9 1161.63L483.05 1160.48L483.43 1159.2L483.05 1157.93L481.9 1156.78L480.24 1155.88L478.33 1155.44L475.14 1155.44L473.22 1155.88L471.56 1156.78L470.42 1157.93L470.03 1159.2M523.53 1176.43L523.53 1167.5L536.93 1173.24M523.53 1159.2L523.92 1160.48L525.06 1161.63L526.72 1162.52L528.64 1162.97L531.83 1162.97L533.74 1162.52L535.4 1161.63L536.55 1160.48L536.93 1159.2L536.55 1157.93L535.4 1156.78L533.74 1155.88L531.83 1155.44L528.64 1155.44L526.72 1155.88L525.06 1156.78L523.92 1157.93L523.53 1159.2M1213.01 523.24L1214.8 522.21L1216.71 520.3L1216.71 533.7M1212.63 533.7L1220.28 533.7M1219.65 546.98L1217.48 546.98L1215.69 547.62L1214.29 548.89L1213.46 550.62L1213.01 553.04L1213.01 557.57L1213.65 559.23L1215.18 560.38L1218.11 560.38L1219.71 559.36L1220.48 557.7L1220.48 555.02L1219.84 553.49L1218.24 552.4L1215.43 552.4L1213.78 553.36L1213.01 555.02M1219.9 573.66L1213.71 573.66L1213.14 579.53L1214.41 578.76L1216.07 578.38L1217.73 578.38L1219.14 579.02L1220.03 580.04L1220.48 581.57L1220.48 583.87L1220.03 585.34L1219.14 586.36L1217.73 587.06L1215.43 587.06L1213.9 586.42L1213.01 585.4M1212.75 601.87L1213.65 600.98L1215.18 600.34L1217.99 600.34L1219.39 600.85L1220.28 601.87L1220.67 603.15L1220.41 604.55L1219.52 606.08L1212.24 613.74L1220.92 613.74M1212.37 627.02L1220.41 627.02L1216.01 632.12L1217.73 632.12L1219.26 632.76L1220.03 633.53L1220.67 635L1220.67 637.36L1220.03 638.89L1219.26 639.65L1217.73 640.42L1215.18 640.42L1213.65 639.78L1212.88 639.14L1212.24 638M1212.24 653.7L1221.18 653.7L1215.43 667.1M1292.73 498.46L1293.37 499.86L1294.65 500.57L1296.56 500.57L1297.84 499.86L1298.6 498.46L1298.6 496.16L1297.84 494.76L1296.56 494.06L1294.65 494.06L1293.37 494.76L1292.73 496.16L1292.73 498.46M1298.6 498.46L1299.5 500.12L1300.9 501.01L1303.71 501.01L1305.11 500.25L1306.13 498.71L1306.13 495.91L1305.11 494.38L1303.71 493.61L1300.9 493.61L1299.5 494.5L1298.6 496.16M1292.73 739.58L1302.05 743.28L1302.05 734.47M1298.16 737.02L1306.13 737.02" stroke="#A90000" stroke-width="1.55" stroke-linecap="round" stroke-linejoin="round" fill="none"/>
</svg></body></html>
